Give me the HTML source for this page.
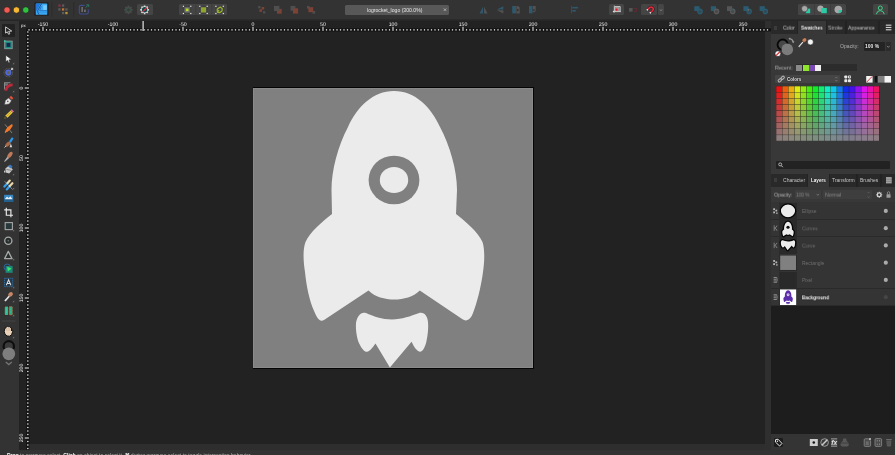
<!DOCTYPE html><html><head><meta charset="utf-8"><title>logrocket_logo</title><style>
*{margin:0;padding:0;box-sizing:border-box}
html,body{width:895px;height:455px;overflow:hidden;background:#222;font-family:"Liberation Sans",sans-serif;}
body{position:relative}
.abs{position:absolute}
.t{position:absolute;white-space:nowrap;line-height:1;color:#ccc;font-size:5.6px}
.btn{position:absolute;background:#464646;border-radius:1.5px}
svg{position:absolute;left:0;top:0;overflow:visible}
</style></head><body><div id="app" style="position:absolute;left:0;top:0;width:895px;height:455px;will-change:transform">
<div class="abs" style="left:19px;top:20px;width:752px;height:430px;background:#222"></div>
<div class="abs" style="left:253px;top:87px;width:281px;height:282px;background:#050505"></div>
<div class="abs" style="left:253px;top:88px;width:280px;height:280px;background:#808080;box-shadow:inset 0 0 0 1px #8a8a8a"></div>
<svg width="895" height="455" viewBox="0 0 895 455">
<path fill="#ebebeb" d="M394 91 C373 91 357 107 348 127 C338 146 331.5 170 331.5 190 L332 214 C322 222 310 232 305.5 242 C302.5 250 303.5 262 305 272 C306.3 285 309.3 301 314.3 311.5 C316.3 316 319 322.8 324 320 L368.5 290.5 C375 297 385 299.5 394 299.5 C404 299.5 413 297 419.8 290.5 L462.5 319.3 C467 322.5 471 318.5 473 313 C477 303 481 287 483 272 C484.5 262 485 250 482.5 242 C478 232 466 222 456 214 L457 190 C457 170 450 146 440 127 C431 107 415 91 394 91 Z"/>
<ellipse cx="394" cy="180" rx="25.4" ry="24.3" fill="#808080"/>
<ellipse cx="394" cy="180" rx="14.2" ry="13" fill="#ebebeb"/>
<path fill="#ebebeb" d="M366 313 C361 311.3 357 316 356 323 C355.5 330 357 340 360 345 C362 349 364.5 352 367 351.8 C370 351.5 373 347 375.5 343.5 L389.9 367.5 L411.5 341.7 C413 344 415 350 419.8 351.8 C423 352 425.5 346 426.5 341 C428 334 428.5 327 428 322 C427.5 316 424 311.3 418.5 313.3 C411 316 402 319.5 392 319.5 C382 319.5 373 316 366 313 Z"/>
</svg>
<div class="abs" style="left:765px;top:21px;width:6px;height:429px;background:#2f2f2f"></div>
<div class="abs" style="left:29px;top:444.4px;width:736px;height:5.6px;background:#2e2e2e"></div>
<svg width="895" height="455" viewBox="0 0 895 455"><rect x="29" y="28.4" width="742" height="2.9" fill="#131313"/><rect x="26.3" y="28.4" width="2.9" height="421.6" fill="#131313"/><rect x="27.75" y="28.5" width="2.5" height="2.8" fill="#141414"/><rect x="31.25" y="28.5" width="2.5" height="2.8" fill="#141414"/><rect x="34.75" y="28.5" width="2.5" height="2.8" fill="#141414"/><rect x="38.25" y="28.5" width="2.5" height="2.8" fill="#141414"/><rect x="41.90" y="26.2" width="2.2" height="5.2" fill="#121212"/><rect x="45.25" y="28.5" width="2.5" height="2.8" fill="#141414"/><rect x="48.75" y="28.5" width="2.5" height="2.8" fill="#141414"/><rect x="52.25" y="28.5" width="2.5" height="2.8" fill="#141414"/><rect x="55.75" y="28.5" width="2.5" height="2.8" fill="#141414"/><rect x="59.25" y="28.5" width="2.5" height="2.8" fill="#141414"/><rect x="62.75" y="28.5" width="2.5" height="2.8" fill="#141414"/><rect x="66.25" y="28.5" width="2.5" height="2.8" fill="#141414"/><rect x="69.75" y="28.5" width="2.5" height="2.8" fill="#141414"/><rect x="73.25" y="28.5" width="2.5" height="2.8" fill="#141414"/><rect x="76.75" y="28.5" width="2.5" height="2.8" fill="#141414"/><rect x="80.25" y="28.5" width="2.5" height="2.8" fill="#141414"/><rect x="83.75" y="28.5" width="2.5" height="2.8" fill="#141414"/><rect x="87.25" y="28.5" width="2.5" height="2.8" fill="#141414"/><rect x="90.75" y="28.5" width="2.5" height="2.8" fill="#141414"/><rect x="94.25" y="28.5" width="2.5" height="2.8" fill="#141414"/><rect x="97.75" y="28.5" width="2.5" height="2.8" fill="#141414"/><rect x="101.25" y="28.5" width="2.5" height="2.8" fill="#141414"/><rect x="104.75" y="28.5" width="2.5" height="2.8" fill="#141414"/><rect x="108.25" y="28.5" width="2.5" height="2.8" fill="#141414"/><rect x="111.90" y="26.2" width="2.2" height="5.2" fill="#121212"/><rect x="115.25" y="28.5" width="2.5" height="2.8" fill="#141414"/><rect x="118.75" y="28.5" width="2.5" height="2.8" fill="#141414"/><rect x="122.25" y="28.5" width="2.5" height="2.8" fill="#141414"/><rect x="125.75" y="28.5" width="2.5" height="2.8" fill="#141414"/><rect x="129.25" y="28.5" width="2.5" height="2.8" fill="#141414"/><rect x="132.75" y="28.5" width="2.5" height="2.8" fill="#141414"/><rect x="136.25" y="28.5" width="2.5" height="2.8" fill="#141414"/><rect x="139.75" y="28.5" width="2.5" height="2.8" fill="#141414"/><rect x="143.25" y="28.5" width="2.5" height="2.8" fill="#141414"/><rect x="146.75" y="28.5" width="2.5" height="2.8" fill="#141414"/><rect x="150.25" y="28.5" width="2.5" height="2.8" fill="#141414"/><rect x="153.75" y="28.5" width="2.5" height="2.8" fill="#141414"/><rect x="157.25" y="28.5" width="2.5" height="2.8" fill="#141414"/><rect x="160.75" y="28.5" width="2.5" height="2.8" fill="#141414"/><rect x="164.25" y="28.5" width="2.5" height="2.8" fill="#141414"/><rect x="167.75" y="28.5" width="2.5" height="2.8" fill="#141414"/><rect x="171.25" y="28.5" width="2.5" height="2.8" fill="#141414"/><rect x="174.75" y="28.5" width="2.5" height="2.8" fill="#141414"/><rect x="178.25" y="28.5" width="2.5" height="2.8" fill="#141414"/><rect x="181.90" y="26.2" width="2.2" height="5.2" fill="#121212"/><rect x="185.25" y="28.5" width="2.5" height="2.8" fill="#141414"/><rect x="188.75" y="28.5" width="2.5" height="2.8" fill="#141414"/><rect x="192.25" y="28.5" width="2.5" height="2.8" fill="#141414"/><rect x="195.75" y="28.5" width="2.5" height="2.8" fill="#141414"/><rect x="199.25" y="28.5" width="2.5" height="2.8" fill="#141414"/><rect x="202.75" y="28.5" width="2.5" height="2.8" fill="#141414"/><rect x="206.25" y="28.5" width="2.5" height="2.8" fill="#141414"/><rect x="209.75" y="28.5" width="2.5" height="2.8" fill="#141414"/><rect x="213.25" y="28.5" width="2.5" height="2.8" fill="#141414"/><rect x="216.75" y="28.5" width="2.5" height="2.8" fill="#141414"/><rect x="220.25" y="28.5" width="2.5" height="2.8" fill="#141414"/><rect x="223.75" y="28.5" width="2.5" height="2.8" fill="#141414"/><rect x="227.25" y="28.5" width="2.5" height="2.8" fill="#141414"/><rect x="230.75" y="28.5" width="2.5" height="2.8" fill="#141414"/><rect x="234.25" y="28.5" width="2.5" height="2.8" fill="#141414"/><rect x="237.75" y="28.5" width="2.5" height="2.8" fill="#141414"/><rect x="241.25" y="28.5" width="2.5" height="2.8" fill="#141414"/><rect x="244.75" y="28.5" width="2.5" height="2.8" fill="#141414"/><rect x="248.25" y="28.5" width="2.5" height="2.8" fill="#141414"/><rect x="251.90" y="26.2" width="2.2" height="5.2" fill="#121212"/><rect x="255.25" y="28.5" width="2.5" height="2.8" fill="#141414"/><rect x="258.75" y="28.5" width="2.5" height="2.8" fill="#141414"/><rect x="262.25" y="28.5" width="2.5" height="2.8" fill="#141414"/><rect x="265.75" y="28.5" width="2.5" height="2.8" fill="#141414"/><rect x="269.25" y="28.5" width="2.5" height="2.8" fill="#141414"/><rect x="272.75" y="28.5" width="2.5" height="2.8" fill="#141414"/><rect x="276.25" y="28.5" width="2.5" height="2.8" fill="#141414"/><rect x="279.75" y="28.5" width="2.5" height="2.8" fill="#141414"/><rect x="283.25" y="28.5" width="2.5" height="2.8" fill="#141414"/><rect x="286.75" y="28.5" width="2.5" height="2.8" fill="#141414"/><rect x="290.25" y="28.5" width="2.5" height="2.8" fill="#141414"/><rect x="293.75" y="28.5" width="2.5" height="2.8" fill="#141414"/><rect x="297.25" y="28.5" width="2.5" height="2.8" fill="#141414"/><rect x="300.75" y="28.5" width="2.5" height="2.8" fill="#141414"/><rect x="304.25" y="28.5" width="2.5" height="2.8" fill="#141414"/><rect x="307.75" y="28.5" width="2.5" height="2.8" fill="#141414"/><rect x="311.25" y="28.5" width="2.5" height="2.8" fill="#141414"/><rect x="314.75" y="28.5" width="2.5" height="2.8" fill="#141414"/><rect x="318.25" y="28.5" width="2.5" height="2.8" fill="#141414"/><rect x="321.90" y="26.2" width="2.2" height="5.2" fill="#121212"/><rect x="325.25" y="28.5" width="2.5" height="2.8" fill="#141414"/><rect x="328.75" y="28.5" width="2.5" height="2.8" fill="#141414"/><rect x="332.25" y="28.5" width="2.5" height="2.8" fill="#141414"/><rect x="335.75" y="28.5" width="2.5" height="2.8" fill="#141414"/><rect x="339.25" y="28.5" width="2.5" height="2.8" fill="#141414"/><rect x="342.75" y="28.5" width="2.5" height="2.8" fill="#141414"/><rect x="346.25" y="28.5" width="2.5" height="2.8" fill="#141414"/><rect x="349.75" y="28.5" width="2.5" height="2.8" fill="#141414"/><rect x="353.25" y="28.5" width="2.5" height="2.8" fill="#141414"/><rect x="356.75" y="28.5" width="2.5" height="2.8" fill="#141414"/><rect x="360.25" y="28.5" width="2.5" height="2.8" fill="#141414"/><rect x="363.75" y="28.5" width="2.5" height="2.8" fill="#141414"/><rect x="367.25" y="28.5" width="2.5" height="2.8" fill="#141414"/><rect x="370.75" y="28.5" width="2.5" height="2.8" fill="#141414"/><rect x="374.25" y="28.5" width="2.5" height="2.8" fill="#141414"/><rect x="377.75" y="28.5" width="2.5" height="2.8" fill="#141414"/><rect x="381.25" y="28.5" width="2.5" height="2.8" fill="#141414"/><rect x="384.75" y="28.5" width="2.5" height="2.8" fill="#141414"/><rect x="388.25" y="28.5" width="2.5" height="2.8" fill="#141414"/><rect x="391.90" y="26.2" width="2.2" height="5.2" fill="#121212"/><rect x="395.25" y="28.5" width="2.5" height="2.8" fill="#141414"/><rect x="398.75" y="28.5" width="2.5" height="2.8" fill="#141414"/><rect x="402.25" y="28.5" width="2.5" height="2.8" fill="#141414"/><rect x="405.75" y="28.5" width="2.5" height="2.8" fill="#141414"/><rect x="409.25" y="28.5" width="2.5" height="2.8" fill="#141414"/><rect x="412.75" y="28.5" width="2.5" height="2.8" fill="#141414"/><rect x="416.25" y="28.5" width="2.5" height="2.8" fill="#141414"/><rect x="419.75" y="28.5" width="2.5" height="2.8" fill="#141414"/><rect x="423.25" y="28.5" width="2.5" height="2.8" fill="#141414"/><rect x="426.75" y="28.5" width="2.5" height="2.8" fill="#141414"/><rect x="430.25" y="28.5" width="2.5" height="2.8" fill="#141414"/><rect x="433.75" y="28.5" width="2.5" height="2.8" fill="#141414"/><rect x="437.25" y="28.5" width="2.5" height="2.8" fill="#141414"/><rect x="440.75" y="28.5" width="2.5" height="2.8" fill="#141414"/><rect x="444.25" y="28.5" width="2.5" height="2.8" fill="#141414"/><rect x="447.75" y="28.5" width="2.5" height="2.8" fill="#141414"/><rect x="451.25" y="28.5" width="2.5" height="2.8" fill="#141414"/><rect x="454.75" y="28.5" width="2.5" height="2.8" fill="#141414"/><rect x="458.25" y="28.5" width="2.5" height="2.8" fill="#141414"/><rect x="461.90" y="26.2" width="2.2" height="5.2" fill="#121212"/><rect x="465.25" y="28.5" width="2.5" height="2.8" fill="#141414"/><rect x="468.75" y="28.5" width="2.5" height="2.8" fill="#141414"/><rect x="472.25" y="28.5" width="2.5" height="2.8" fill="#141414"/><rect x="475.75" y="28.5" width="2.5" height="2.8" fill="#141414"/><rect x="479.25" y="28.5" width="2.5" height="2.8" fill="#141414"/><rect x="482.75" y="28.5" width="2.5" height="2.8" fill="#141414"/><rect x="486.25" y="28.5" width="2.5" height="2.8" fill="#141414"/><rect x="489.75" y="28.5" width="2.5" height="2.8" fill="#141414"/><rect x="493.25" y="28.5" width="2.5" height="2.8" fill="#141414"/><rect x="496.75" y="28.5" width="2.5" height="2.8" fill="#141414"/><rect x="500.25" y="28.5" width="2.5" height="2.8" fill="#141414"/><rect x="503.75" y="28.5" width="2.5" height="2.8" fill="#141414"/><rect x="507.25" y="28.5" width="2.5" height="2.8" fill="#141414"/><rect x="510.75" y="28.5" width="2.5" height="2.8" fill="#141414"/><rect x="514.25" y="28.5" width="2.5" height="2.8" fill="#141414"/><rect x="517.75" y="28.5" width="2.5" height="2.8" fill="#141414"/><rect x="521.25" y="28.5" width="2.5" height="2.8" fill="#141414"/><rect x="524.75" y="28.5" width="2.5" height="2.8" fill="#141414"/><rect x="528.25" y="28.5" width="2.5" height="2.8" fill="#141414"/><rect x="531.90" y="26.2" width="2.2" height="5.2" fill="#121212"/><rect x="535.25" y="28.5" width="2.5" height="2.8" fill="#141414"/><rect x="538.75" y="28.5" width="2.5" height="2.8" fill="#141414"/><rect x="542.25" y="28.5" width="2.5" height="2.8" fill="#141414"/><rect x="545.75" y="28.5" width="2.5" height="2.8" fill="#141414"/><rect x="549.25" y="28.5" width="2.5" height="2.8" fill="#141414"/><rect x="552.75" y="28.5" width="2.5" height="2.8" fill="#141414"/><rect x="556.25" y="28.5" width="2.5" height="2.8" fill="#141414"/><rect x="559.75" y="28.5" width="2.5" height="2.8" fill="#141414"/><rect x="563.25" y="28.5" width="2.5" height="2.8" fill="#141414"/><rect x="566.75" y="28.5" width="2.5" height="2.8" fill="#141414"/><rect x="570.25" y="28.5" width="2.5" height="2.8" fill="#141414"/><rect x="573.75" y="28.5" width="2.5" height="2.8" fill="#141414"/><rect x="577.25" y="28.5" width="2.5" height="2.8" fill="#141414"/><rect x="580.75" y="28.5" width="2.5" height="2.8" fill="#141414"/><rect x="584.25" y="28.5" width="2.5" height="2.8" fill="#141414"/><rect x="587.75" y="28.5" width="2.5" height="2.8" fill="#141414"/><rect x="591.25" y="28.5" width="2.5" height="2.8" fill="#141414"/><rect x="594.75" y="28.5" width="2.5" height="2.8" fill="#141414"/><rect x="598.25" y="28.5" width="2.5" height="2.8" fill="#141414"/><rect x="601.90" y="26.2" width="2.2" height="5.2" fill="#121212"/><rect x="605.25" y="28.5" width="2.5" height="2.8" fill="#141414"/><rect x="608.75" y="28.5" width="2.5" height="2.8" fill="#141414"/><rect x="612.25" y="28.5" width="2.5" height="2.8" fill="#141414"/><rect x="615.75" y="28.5" width="2.5" height="2.8" fill="#141414"/><rect x="619.25" y="28.5" width="2.5" height="2.8" fill="#141414"/><rect x="622.75" y="28.5" width="2.5" height="2.8" fill="#141414"/><rect x="626.25" y="28.5" width="2.5" height="2.8" fill="#141414"/><rect x="629.75" y="28.5" width="2.5" height="2.8" fill="#141414"/><rect x="633.25" y="28.5" width="2.5" height="2.8" fill="#141414"/><rect x="636.75" y="28.5" width="2.5" height="2.8" fill="#141414"/><rect x="640.25" y="28.5" width="2.5" height="2.8" fill="#141414"/><rect x="643.75" y="28.5" width="2.5" height="2.8" fill="#141414"/><rect x="647.25" y="28.5" width="2.5" height="2.8" fill="#141414"/><rect x="650.75" y="28.5" width="2.5" height="2.8" fill="#141414"/><rect x="654.25" y="28.5" width="2.5" height="2.8" fill="#141414"/><rect x="657.75" y="28.5" width="2.5" height="2.8" fill="#141414"/><rect x="661.25" y="28.5" width="2.5" height="2.8" fill="#141414"/><rect x="664.75" y="28.5" width="2.5" height="2.8" fill="#141414"/><rect x="668.25" y="28.5" width="2.5" height="2.8" fill="#141414"/><rect x="671.90" y="26.2" width="2.2" height="5.2" fill="#121212"/><rect x="675.25" y="28.5" width="2.5" height="2.8" fill="#141414"/><rect x="678.75" y="28.5" width="2.5" height="2.8" fill="#141414"/><rect x="682.25" y="28.5" width="2.5" height="2.8" fill="#141414"/><rect x="685.75" y="28.5" width="2.5" height="2.8" fill="#141414"/><rect x="689.25" y="28.5" width="2.5" height="2.8" fill="#141414"/><rect x="692.75" y="28.5" width="2.5" height="2.8" fill="#141414"/><rect x="696.25" y="28.5" width="2.5" height="2.8" fill="#141414"/><rect x="699.75" y="28.5" width="2.5" height="2.8" fill="#141414"/><rect x="703.25" y="28.5" width="2.5" height="2.8" fill="#141414"/><rect x="706.75" y="28.5" width="2.5" height="2.8" fill="#141414"/><rect x="710.25" y="28.5" width="2.5" height="2.8" fill="#141414"/><rect x="713.75" y="28.5" width="2.5" height="2.8" fill="#141414"/><rect x="717.25" y="28.5" width="2.5" height="2.8" fill="#141414"/><rect x="720.75" y="28.5" width="2.5" height="2.8" fill="#141414"/><rect x="724.25" y="28.5" width="2.5" height="2.8" fill="#141414"/><rect x="727.75" y="28.5" width="2.5" height="2.8" fill="#141414"/><rect x="731.25" y="28.5" width="2.5" height="2.8" fill="#141414"/><rect x="734.75" y="28.5" width="2.5" height="2.8" fill="#141414"/><rect x="738.25" y="28.5" width="2.5" height="2.8" fill="#141414"/><rect x="741.90" y="26.2" width="2.2" height="5.2" fill="#121212"/><rect x="745.25" y="28.5" width="2.5" height="2.8" fill="#141414"/><rect x="748.75" y="28.5" width="2.5" height="2.8" fill="#141414"/><rect x="752.25" y="28.5" width="2.5" height="2.8" fill="#141414"/><rect x="755.75" y="28.5" width="2.5" height="2.8" fill="#141414"/><rect x="759.25" y="28.5" width="2.5" height="2.8" fill="#141414"/><rect x="762.75" y="28.5" width="2.5" height="2.8" fill="#141414"/><rect x="766.25" y="28.5" width="2.5" height="2.8" fill="#141414"/><rect x="26.4" y="30.75" width="2.8" height="2.5" fill="#141414"/><rect x="26.4" y="34.25" width="2.8" height="2.5" fill="#141414"/><rect x="26.4" y="37.75" width="2.8" height="2.5" fill="#141414"/><rect x="26.4" y="41.25" width="2.8" height="2.5" fill="#141414"/><rect x="26.4" y="44.75" width="2.8" height="2.5" fill="#141414"/><rect x="26.4" y="48.25" width="2.8" height="2.5" fill="#141414"/><rect x="26.4" y="51.75" width="2.8" height="2.5" fill="#141414"/><rect x="26.4" y="55.25" width="2.8" height="2.5" fill="#141414"/><rect x="26.4" y="58.75" width="2.8" height="2.5" fill="#141414"/><rect x="26.4" y="62.25" width="2.8" height="2.5" fill="#141414"/><rect x="26.4" y="65.75" width="2.8" height="2.5" fill="#141414"/><rect x="26.4" y="69.25" width="2.8" height="2.5" fill="#141414"/><rect x="26.4" y="72.75" width="2.8" height="2.5" fill="#141414"/><rect x="26.4" y="76.25" width="2.8" height="2.5" fill="#141414"/><rect x="26.4" y="79.75" width="2.8" height="2.5" fill="#141414"/><rect x="26.4" y="83.25" width="2.8" height="2.5" fill="#141414"/><rect x="24.2" y="86.90" width="5.2" height="2.2" fill="#121212"/><rect x="26.4" y="90.25" width="2.8" height="2.5" fill="#141414"/><rect x="26.4" y="93.75" width="2.8" height="2.5" fill="#141414"/><rect x="26.4" y="97.25" width="2.8" height="2.5" fill="#141414"/><rect x="26.4" y="100.75" width="2.8" height="2.5" fill="#141414"/><rect x="26.4" y="104.25" width="2.8" height="2.5" fill="#141414"/><rect x="26.4" y="107.75" width="2.8" height="2.5" fill="#141414"/><rect x="26.4" y="111.25" width="2.8" height="2.5" fill="#141414"/><rect x="26.4" y="114.75" width="2.8" height="2.5" fill="#141414"/><rect x="26.4" y="118.25" width="2.8" height="2.5" fill="#141414"/><rect x="26.4" y="121.75" width="2.8" height="2.5" fill="#141414"/><rect x="26.4" y="125.25" width="2.8" height="2.5" fill="#141414"/><rect x="26.4" y="128.75" width="2.8" height="2.5" fill="#141414"/><rect x="26.4" y="132.25" width="2.8" height="2.5" fill="#141414"/><rect x="26.4" y="135.75" width="2.8" height="2.5" fill="#141414"/><rect x="26.4" y="139.25" width="2.8" height="2.5" fill="#141414"/><rect x="26.4" y="142.75" width="2.8" height="2.5" fill="#141414"/><rect x="26.4" y="146.25" width="2.8" height="2.5" fill="#141414"/><rect x="26.4" y="149.75" width="2.8" height="2.5" fill="#141414"/><rect x="26.4" y="153.25" width="2.8" height="2.5" fill="#141414"/><rect x="24.2" y="156.90" width="5.2" height="2.2" fill="#121212"/><rect x="26.4" y="160.25" width="2.8" height="2.5" fill="#141414"/><rect x="26.4" y="163.75" width="2.8" height="2.5" fill="#141414"/><rect x="26.4" y="167.25" width="2.8" height="2.5" fill="#141414"/><rect x="26.4" y="170.75" width="2.8" height="2.5" fill="#141414"/><rect x="26.4" y="174.25" width="2.8" height="2.5" fill="#141414"/><rect x="26.4" y="177.75" width="2.8" height="2.5" fill="#141414"/><rect x="26.4" y="181.25" width="2.8" height="2.5" fill="#141414"/><rect x="26.4" y="184.75" width="2.8" height="2.5" fill="#141414"/><rect x="26.4" y="188.25" width="2.8" height="2.5" fill="#141414"/><rect x="26.4" y="191.75" width="2.8" height="2.5" fill="#141414"/><rect x="26.4" y="195.25" width="2.8" height="2.5" fill="#141414"/><rect x="26.4" y="198.75" width="2.8" height="2.5" fill="#141414"/><rect x="26.4" y="202.25" width="2.8" height="2.5" fill="#141414"/><rect x="26.4" y="205.75" width="2.8" height="2.5" fill="#141414"/><rect x="26.4" y="209.25" width="2.8" height="2.5" fill="#141414"/><rect x="26.4" y="212.75" width="2.8" height="2.5" fill="#141414"/><rect x="26.4" y="216.25" width="2.8" height="2.5" fill="#141414"/><rect x="26.4" y="219.75" width="2.8" height="2.5" fill="#141414"/><rect x="26.4" y="223.25" width="2.8" height="2.5" fill="#141414"/><rect x="24.2" y="226.90" width="5.2" height="2.2" fill="#121212"/><rect x="26.4" y="230.25" width="2.8" height="2.5" fill="#141414"/><rect x="26.4" y="233.75" width="2.8" height="2.5" fill="#141414"/><rect x="26.4" y="237.25" width="2.8" height="2.5" fill="#141414"/><rect x="26.4" y="240.75" width="2.8" height="2.5" fill="#141414"/><rect x="26.4" y="244.25" width="2.8" height="2.5" fill="#141414"/><rect x="26.4" y="247.75" width="2.8" height="2.5" fill="#141414"/><rect x="26.4" y="251.25" width="2.8" height="2.5" fill="#141414"/><rect x="26.4" y="254.75" width="2.8" height="2.5" fill="#141414"/><rect x="26.4" y="258.25" width="2.8" height="2.5" fill="#141414"/><rect x="26.4" y="261.75" width="2.8" height="2.5" fill="#141414"/><rect x="26.4" y="265.25" width="2.8" height="2.5" fill="#141414"/><rect x="26.4" y="268.75" width="2.8" height="2.5" fill="#141414"/><rect x="26.4" y="272.25" width="2.8" height="2.5" fill="#141414"/><rect x="26.4" y="275.75" width="2.8" height="2.5" fill="#141414"/><rect x="26.4" y="279.25" width="2.8" height="2.5" fill="#141414"/><rect x="26.4" y="282.75" width="2.8" height="2.5" fill="#141414"/><rect x="26.4" y="286.25" width="2.8" height="2.5" fill="#141414"/><rect x="26.4" y="289.75" width="2.8" height="2.5" fill="#141414"/><rect x="26.4" y="293.25" width="2.8" height="2.5" fill="#141414"/><rect x="24.2" y="296.90" width="5.2" height="2.2" fill="#121212"/><rect x="26.4" y="300.25" width="2.8" height="2.5" fill="#141414"/><rect x="26.4" y="303.75" width="2.8" height="2.5" fill="#141414"/><rect x="26.4" y="307.25" width="2.8" height="2.5" fill="#141414"/><rect x="26.4" y="310.75" width="2.8" height="2.5" fill="#141414"/><rect x="26.4" y="314.25" width="2.8" height="2.5" fill="#141414"/><rect x="26.4" y="317.75" width="2.8" height="2.5" fill="#141414"/><rect x="26.4" y="321.25" width="2.8" height="2.5" fill="#141414"/><rect x="26.4" y="324.75" width="2.8" height="2.5" fill="#141414"/><rect x="26.4" y="328.25" width="2.8" height="2.5" fill="#141414"/><rect x="26.4" y="331.75" width="2.8" height="2.5" fill="#141414"/><rect x="26.4" y="335.25" width="2.8" height="2.5" fill="#141414"/><rect x="26.4" y="338.75" width="2.8" height="2.5" fill="#141414"/><rect x="26.4" y="342.25" width="2.8" height="2.5" fill="#141414"/><rect x="26.4" y="345.75" width="2.8" height="2.5" fill="#141414"/><rect x="26.4" y="349.25" width="2.8" height="2.5" fill="#141414"/><rect x="26.4" y="352.75" width="2.8" height="2.5" fill="#141414"/><rect x="26.4" y="356.25" width="2.8" height="2.5" fill="#141414"/><rect x="26.4" y="359.75" width="2.8" height="2.5" fill="#141414"/><rect x="26.4" y="363.25" width="2.8" height="2.5" fill="#141414"/><rect x="24.2" y="366.90" width="5.2" height="2.2" fill="#121212"/><rect x="26.4" y="370.25" width="2.8" height="2.5" fill="#141414"/><rect x="26.4" y="373.75" width="2.8" height="2.5" fill="#141414"/><rect x="26.4" y="377.25" width="2.8" height="2.5" fill="#141414"/><rect x="26.4" y="380.75" width="2.8" height="2.5" fill="#141414"/><rect x="26.4" y="384.25" width="2.8" height="2.5" fill="#141414"/><rect x="26.4" y="387.75" width="2.8" height="2.5" fill="#141414"/><rect x="26.4" y="391.25" width="2.8" height="2.5" fill="#141414"/><rect x="26.4" y="394.75" width="2.8" height="2.5" fill="#141414"/><rect x="26.4" y="398.25" width="2.8" height="2.5" fill="#141414"/><rect x="26.4" y="401.75" width="2.8" height="2.5" fill="#141414"/><rect x="26.4" y="405.25" width="2.8" height="2.5" fill="#141414"/><rect x="26.4" y="408.75" width="2.8" height="2.5" fill="#141414"/><rect x="26.4" y="412.25" width="2.8" height="2.5" fill="#141414"/><rect x="26.4" y="415.75" width="2.8" height="2.5" fill="#141414"/><rect x="26.4" y="419.25" width="2.8" height="2.5" fill="#141414"/><rect x="26.4" y="422.75" width="2.8" height="2.5" fill="#141414"/><rect x="26.4" y="426.25" width="2.8" height="2.5" fill="#141414"/><rect x="26.4" y="429.75" width="2.8" height="2.5" fill="#141414"/><rect x="26.4" y="433.25" width="2.8" height="2.5" fill="#141414"/><rect x="24.2" y="436.90" width="5.2" height="2.2" fill="#121212"/><rect x="26.4" y="440.25" width="2.8" height="2.5" fill="#141414"/><rect x="26.4" y="443.75" width="2.8" height="2.5" fill="#141414"/><rect x="26.4" y="447.25" width="2.8" height="2.5" fill="#141414"/><rect x="28.38" y="29.1" width="1.24" height="1.5" fill="#d4d4d4"/><rect x="31.88" y="29.1" width="1.24" height="1.5" fill="#d4d4d4"/><rect x="35.38" y="29.1" width="1.24" height="1.5" fill="#d4d4d4"/><rect x="38.88" y="29.1" width="1.24" height="1.5" fill="#d4d4d4"/><rect x="42.45" y="26.7" width="1.1" height="4.2" fill="#e2e2e2"/><rect x="45.88" y="29.1" width="1.24" height="1.5" fill="#d4d4d4"/><rect x="49.38" y="29.1" width="1.24" height="1.5" fill="#d4d4d4"/><rect x="52.88" y="29.1" width="1.24" height="1.5" fill="#d4d4d4"/><rect x="56.38" y="29.1" width="1.24" height="1.5" fill="#d4d4d4"/><rect x="59.88" y="29.1" width="1.24" height="1.5" fill="#d4d4d4"/><rect x="63.38" y="29.1" width="1.24" height="1.5" fill="#d4d4d4"/><rect x="66.88" y="29.1" width="1.24" height="1.5" fill="#d4d4d4"/><rect x="70.38" y="29.1" width="1.24" height="1.5" fill="#d4d4d4"/><rect x="73.88" y="29.1" width="1.24" height="1.5" fill="#d4d4d4"/><rect x="77.38" y="29.1" width="1.24" height="1.5" fill="#d4d4d4"/><rect x="80.88" y="29.1" width="1.24" height="1.5" fill="#d4d4d4"/><rect x="84.38" y="29.1" width="1.24" height="1.5" fill="#d4d4d4"/><rect x="87.88" y="29.1" width="1.24" height="1.5" fill="#d4d4d4"/><rect x="91.38" y="29.1" width="1.24" height="1.5" fill="#d4d4d4"/><rect x="94.88" y="29.1" width="1.24" height="1.5" fill="#d4d4d4"/><rect x="98.38" y="29.1" width="1.24" height="1.5" fill="#d4d4d4"/><rect x="101.88" y="29.1" width="1.24" height="1.5" fill="#d4d4d4"/><rect x="105.38" y="29.1" width="1.24" height="1.5" fill="#d4d4d4"/><rect x="108.88" y="29.1" width="1.24" height="1.5" fill="#d4d4d4"/><rect x="112.45" y="26.7" width="1.1" height="4.2" fill="#e2e2e2"/><rect x="115.88" y="29.1" width="1.24" height="1.5" fill="#d4d4d4"/><rect x="119.38" y="29.1" width="1.24" height="1.5" fill="#d4d4d4"/><rect x="122.88" y="29.1" width="1.24" height="1.5" fill="#d4d4d4"/><rect x="126.38" y="29.1" width="1.24" height="1.5" fill="#d4d4d4"/><rect x="129.88" y="29.1" width="1.24" height="1.5" fill="#d4d4d4"/><rect x="133.38" y="29.1" width="1.24" height="1.5" fill="#d4d4d4"/><rect x="136.88" y="29.1" width="1.24" height="1.5" fill="#d4d4d4"/><rect x="140.38" y="29.1" width="1.24" height="1.5" fill="#d4d4d4"/><rect x="143.88" y="29.1" width="1.24" height="1.5" fill="#d4d4d4"/><rect x="147.38" y="29.1" width="1.24" height="1.5" fill="#d4d4d4"/><rect x="150.88" y="29.1" width="1.24" height="1.5" fill="#d4d4d4"/><rect x="154.38" y="29.1" width="1.24" height="1.5" fill="#d4d4d4"/><rect x="157.88" y="29.1" width="1.24" height="1.5" fill="#d4d4d4"/><rect x="161.38" y="29.1" width="1.24" height="1.5" fill="#d4d4d4"/><rect x="164.88" y="29.1" width="1.24" height="1.5" fill="#d4d4d4"/><rect x="168.38" y="29.1" width="1.24" height="1.5" fill="#d4d4d4"/><rect x="171.88" y="29.1" width="1.24" height="1.5" fill="#d4d4d4"/><rect x="175.38" y="29.1" width="1.24" height="1.5" fill="#d4d4d4"/><rect x="178.88" y="29.1" width="1.24" height="1.5" fill="#d4d4d4"/><rect x="182.45" y="26.7" width="1.1" height="4.2" fill="#e2e2e2"/><rect x="185.88" y="29.1" width="1.24" height="1.5" fill="#d4d4d4"/><rect x="189.38" y="29.1" width="1.24" height="1.5" fill="#d4d4d4"/><rect x="192.88" y="29.1" width="1.24" height="1.5" fill="#d4d4d4"/><rect x="196.38" y="29.1" width="1.24" height="1.5" fill="#d4d4d4"/><rect x="199.88" y="29.1" width="1.24" height="1.5" fill="#d4d4d4"/><rect x="203.38" y="29.1" width="1.24" height="1.5" fill="#d4d4d4"/><rect x="206.88" y="29.1" width="1.24" height="1.5" fill="#d4d4d4"/><rect x="210.38" y="29.1" width="1.24" height="1.5" fill="#d4d4d4"/><rect x="213.88" y="29.1" width="1.24" height="1.5" fill="#d4d4d4"/><rect x="217.38" y="29.1" width="1.24" height="1.5" fill="#d4d4d4"/><rect x="220.88" y="29.1" width="1.24" height="1.5" fill="#d4d4d4"/><rect x="224.38" y="29.1" width="1.24" height="1.5" fill="#d4d4d4"/><rect x="227.88" y="29.1" width="1.24" height="1.5" fill="#d4d4d4"/><rect x="231.38" y="29.1" width="1.24" height="1.5" fill="#d4d4d4"/><rect x="234.88" y="29.1" width="1.24" height="1.5" fill="#d4d4d4"/><rect x="238.38" y="29.1" width="1.24" height="1.5" fill="#d4d4d4"/><rect x="241.88" y="29.1" width="1.24" height="1.5" fill="#d4d4d4"/><rect x="245.38" y="29.1" width="1.24" height="1.5" fill="#d4d4d4"/><rect x="248.88" y="29.1" width="1.24" height="1.5" fill="#d4d4d4"/><rect x="252.45" y="26.7" width="1.1" height="4.2" fill="#e2e2e2"/><rect x="255.88" y="29.1" width="1.24" height="1.5" fill="#d4d4d4"/><rect x="259.38" y="29.1" width="1.24" height="1.5" fill="#d4d4d4"/><rect x="262.88" y="29.1" width="1.24" height="1.5" fill="#d4d4d4"/><rect x="266.38" y="29.1" width="1.24" height="1.5" fill="#d4d4d4"/><rect x="269.88" y="29.1" width="1.24" height="1.5" fill="#d4d4d4"/><rect x="273.38" y="29.1" width="1.24" height="1.5" fill="#d4d4d4"/><rect x="276.88" y="29.1" width="1.24" height="1.5" fill="#d4d4d4"/><rect x="280.38" y="29.1" width="1.24" height="1.5" fill="#d4d4d4"/><rect x="283.88" y="29.1" width="1.24" height="1.5" fill="#d4d4d4"/><rect x="287.38" y="29.1" width="1.24" height="1.5" fill="#d4d4d4"/><rect x="290.88" y="29.1" width="1.24" height="1.5" fill="#d4d4d4"/><rect x="294.38" y="29.1" width="1.24" height="1.5" fill="#d4d4d4"/><rect x="297.88" y="29.1" width="1.24" height="1.5" fill="#d4d4d4"/><rect x="301.38" y="29.1" width="1.24" height="1.5" fill="#d4d4d4"/><rect x="304.88" y="29.1" width="1.24" height="1.5" fill="#d4d4d4"/><rect x="308.38" y="29.1" width="1.24" height="1.5" fill="#d4d4d4"/><rect x="311.88" y="29.1" width="1.24" height="1.5" fill="#d4d4d4"/><rect x="315.38" y="29.1" width="1.24" height="1.5" fill="#d4d4d4"/><rect x="318.88" y="29.1" width="1.24" height="1.5" fill="#d4d4d4"/><rect x="322.45" y="26.7" width="1.1" height="4.2" fill="#e2e2e2"/><rect x="325.88" y="29.1" width="1.24" height="1.5" fill="#d4d4d4"/><rect x="329.38" y="29.1" width="1.24" height="1.5" fill="#d4d4d4"/><rect x="332.88" y="29.1" width="1.24" height="1.5" fill="#d4d4d4"/><rect x="336.38" y="29.1" width="1.24" height="1.5" fill="#d4d4d4"/><rect x="339.88" y="29.1" width="1.24" height="1.5" fill="#d4d4d4"/><rect x="343.38" y="29.1" width="1.24" height="1.5" fill="#d4d4d4"/><rect x="346.88" y="29.1" width="1.24" height="1.5" fill="#d4d4d4"/><rect x="350.38" y="29.1" width="1.24" height="1.5" fill="#d4d4d4"/><rect x="353.88" y="29.1" width="1.24" height="1.5" fill="#d4d4d4"/><rect x="357.38" y="29.1" width="1.24" height="1.5" fill="#d4d4d4"/><rect x="360.88" y="29.1" width="1.24" height="1.5" fill="#d4d4d4"/><rect x="364.38" y="29.1" width="1.24" height="1.5" fill="#d4d4d4"/><rect x="367.88" y="29.1" width="1.24" height="1.5" fill="#d4d4d4"/><rect x="371.38" y="29.1" width="1.24" height="1.5" fill="#d4d4d4"/><rect x="374.88" y="29.1" width="1.24" height="1.5" fill="#d4d4d4"/><rect x="378.38" y="29.1" width="1.24" height="1.5" fill="#d4d4d4"/><rect x="381.88" y="29.1" width="1.24" height="1.5" fill="#d4d4d4"/><rect x="385.38" y="29.1" width="1.24" height="1.5" fill="#d4d4d4"/><rect x="388.88" y="29.1" width="1.24" height="1.5" fill="#d4d4d4"/><rect x="392.45" y="26.7" width="1.1" height="4.2" fill="#e2e2e2"/><rect x="395.88" y="29.1" width="1.24" height="1.5" fill="#d4d4d4"/><rect x="399.38" y="29.1" width="1.24" height="1.5" fill="#d4d4d4"/><rect x="402.88" y="29.1" width="1.24" height="1.5" fill="#d4d4d4"/><rect x="406.38" y="29.1" width="1.24" height="1.5" fill="#d4d4d4"/><rect x="409.88" y="29.1" width="1.24" height="1.5" fill="#d4d4d4"/><rect x="413.38" y="29.1" width="1.24" height="1.5" fill="#d4d4d4"/><rect x="416.88" y="29.1" width="1.24" height="1.5" fill="#d4d4d4"/><rect x="420.38" y="29.1" width="1.24" height="1.5" fill="#d4d4d4"/><rect x="423.88" y="29.1" width="1.24" height="1.5" fill="#d4d4d4"/><rect x="427.38" y="29.1" width="1.24" height="1.5" fill="#d4d4d4"/><rect x="430.88" y="29.1" width="1.24" height="1.5" fill="#d4d4d4"/><rect x="434.38" y="29.1" width="1.24" height="1.5" fill="#d4d4d4"/><rect x="437.88" y="29.1" width="1.24" height="1.5" fill="#d4d4d4"/><rect x="441.38" y="29.1" width="1.24" height="1.5" fill="#d4d4d4"/><rect x="444.88" y="29.1" width="1.24" height="1.5" fill="#d4d4d4"/><rect x="448.38" y="29.1" width="1.24" height="1.5" fill="#d4d4d4"/><rect x="451.88" y="29.1" width="1.24" height="1.5" fill="#d4d4d4"/><rect x="455.38" y="29.1" width="1.24" height="1.5" fill="#d4d4d4"/><rect x="458.88" y="29.1" width="1.24" height="1.5" fill="#d4d4d4"/><rect x="462.45" y="26.7" width="1.1" height="4.2" fill="#e2e2e2"/><rect x="465.88" y="29.1" width="1.24" height="1.5" fill="#d4d4d4"/><rect x="469.38" y="29.1" width="1.24" height="1.5" fill="#d4d4d4"/><rect x="472.88" y="29.1" width="1.24" height="1.5" fill="#d4d4d4"/><rect x="476.38" y="29.1" width="1.24" height="1.5" fill="#d4d4d4"/><rect x="479.88" y="29.1" width="1.24" height="1.5" fill="#d4d4d4"/><rect x="483.38" y="29.1" width="1.24" height="1.5" fill="#d4d4d4"/><rect x="486.88" y="29.1" width="1.24" height="1.5" fill="#d4d4d4"/><rect x="490.38" y="29.1" width="1.24" height="1.5" fill="#d4d4d4"/><rect x="493.88" y="29.1" width="1.24" height="1.5" fill="#d4d4d4"/><rect x="497.38" y="29.1" width="1.24" height="1.5" fill="#d4d4d4"/><rect x="500.88" y="29.1" width="1.24" height="1.5" fill="#d4d4d4"/><rect x="504.38" y="29.1" width="1.24" height="1.5" fill="#d4d4d4"/><rect x="507.88" y="29.1" width="1.24" height="1.5" fill="#d4d4d4"/><rect x="511.38" y="29.1" width="1.24" height="1.5" fill="#d4d4d4"/><rect x="514.88" y="29.1" width="1.24" height="1.5" fill="#d4d4d4"/><rect x="518.38" y="29.1" width="1.24" height="1.5" fill="#d4d4d4"/><rect x="521.88" y="29.1" width="1.24" height="1.5" fill="#d4d4d4"/><rect x="525.38" y="29.1" width="1.24" height="1.5" fill="#d4d4d4"/><rect x="528.88" y="29.1" width="1.24" height="1.5" fill="#d4d4d4"/><rect x="532.45" y="26.7" width="1.1" height="4.2" fill="#e2e2e2"/><rect x="535.88" y="29.1" width="1.24" height="1.5" fill="#d4d4d4"/><rect x="539.38" y="29.1" width="1.24" height="1.5" fill="#d4d4d4"/><rect x="542.88" y="29.1" width="1.24" height="1.5" fill="#d4d4d4"/><rect x="546.38" y="29.1" width="1.24" height="1.5" fill="#d4d4d4"/><rect x="549.88" y="29.1" width="1.24" height="1.5" fill="#d4d4d4"/><rect x="553.38" y="29.1" width="1.24" height="1.5" fill="#d4d4d4"/><rect x="556.88" y="29.1" width="1.24" height="1.5" fill="#d4d4d4"/><rect x="560.38" y="29.1" width="1.24" height="1.5" fill="#d4d4d4"/><rect x="563.88" y="29.1" width="1.24" height="1.5" fill="#d4d4d4"/><rect x="567.38" y="29.1" width="1.24" height="1.5" fill="#d4d4d4"/><rect x="570.88" y="29.1" width="1.24" height="1.5" fill="#d4d4d4"/><rect x="574.38" y="29.1" width="1.24" height="1.5" fill="#d4d4d4"/><rect x="577.88" y="29.1" width="1.24" height="1.5" fill="#d4d4d4"/><rect x="581.38" y="29.1" width="1.24" height="1.5" fill="#d4d4d4"/><rect x="584.88" y="29.1" width="1.24" height="1.5" fill="#d4d4d4"/><rect x="588.38" y="29.1" width="1.24" height="1.5" fill="#d4d4d4"/><rect x="591.88" y="29.1" width="1.24" height="1.5" fill="#d4d4d4"/><rect x="595.38" y="29.1" width="1.24" height="1.5" fill="#d4d4d4"/><rect x="598.88" y="29.1" width="1.24" height="1.5" fill="#d4d4d4"/><rect x="602.45" y="26.7" width="1.1" height="4.2" fill="#e2e2e2"/><rect x="605.88" y="29.1" width="1.24" height="1.5" fill="#d4d4d4"/><rect x="609.38" y="29.1" width="1.24" height="1.5" fill="#d4d4d4"/><rect x="612.88" y="29.1" width="1.24" height="1.5" fill="#d4d4d4"/><rect x="616.38" y="29.1" width="1.24" height="1.5" fill="#d4d4d4"/><rect x="619.88" y="29.1" width="1.24" height="1.5" fill="#d4d4d4"/><rect x="623.38" y="29.1" width="1.24" height="1.5" fill="#d4d4d4"/><rect x="626.88" y="29.1" width="1.24" height="1.5" fill="#d4d4d4"/><rect x="630.38" y="29.1" width="1.24" height="1.5" fill="#d4d4d4"/><rect x="633.88" y="29.1" width="1.24" height="1.5" fill="#d4d4d4"/><rect x="637.38" y="29.1" width="1.24" height="1.5" fill="#d4d4d4"/><rect x="640.88" y="29.1" width="1.24" height="1.5" fill="#d4d4d4"/><rect x="644.38" y="29.1" width="1.24" height="1.5" fill="#d4d4d4"/><rect x="647.88" y="29.1" width="1.24" height="1.5" fill="#d4d4d4"/><rect x="651.38" y="29.1" width="1.24" height="1.5" fill="#d4d4d4"/><rect x="654.88" y="29.1" width="1.24" height="1.5" fill="#d4d4d4"/><rect x="658.38" y="29.1" width="1.24" height="1.5" fill="#d4d4d4"/><rect x="661.88" y="29.1" width="1.24" height="1.5" fill="#d4d4d4"/><rect x="665.38" y="29.1" width="1.24" height="1.5" fill="#d4d4d4"/><rect x="668.88" y="29.1" width="1.24" height="1.5" fill="#d4d4d4"/><rect x="672.45" y="26.7" width="1.1" height="4.2" fill="#e2e2e2"/><rect x="675.88" y="29.1" width="1.24" height="1.5" fill="#d4d4d4"/><rect x="679.38" y="29.1" width="1.24" height="1.5" fill="#d4d4d4"/><rect x="682.88" y="29.1" width="1.24" height="1.5" fill="#d4d4d4"/><rect x="686.38" y="29.1" width="1.24" height="1.5" fill="#d4d4d4"/><rect x="689.88" y="29.1" width="1.24" height="1.5" fill="#d4d4d4"/><rect x="693.38" y="29.1" width="1.24" height="1.5" fill="#d4d4d4"/><rect x="696.88" y="29.1" width="1.24" height="1.5" fill="#d4d4d4"/><rect x="700.38" y="29.1" width="1.24" height="1.5" fill="#d4d4d4"/><rect x="703.88" y="29.1" width="1.24" height="1.5" fill="#d4d4d4"/><rect x="707.38" y="29.1" width="1.24" height="1.5" fill="#d4d4d4"/><rect x="710.88" y="29.1" width="1.24" height="1.5" fill="#d4d4d4"/><rect x="714.38" y="29.1" width="1.24" height="1.5" fill="#d4d4d4"/><rect x="717.88" y="29.1" width="1.24" height="1.5" fill="#d4d4d4"/><rect x="721.38" y="29.1" width="1.24" height="1.5" fill="#d4d4d4"/><rect x="724.88" y="29.1" width="1.24" height="1.5" fill="#d4d4d4"/><rect x="728.38" y="29.1" width="1.24" height="1.5" fill="#d4d4d4"/><rect x="731.88" y="29.1" width="1.24" height="1.5" fill="#d4d4d4"/><rect x="735.38" y="29.1" width="1.24" height="1.5" fill="#d4d4d4"/><rect x="738.88" y="29.1" width="1.24" height="1.5" fill="#d4d4d4"/><rect x="742.45" y="26.7" width="1.1" height="4.2" fill="#e2e2e2"/><rect x="745.88" y="29.1" width="1.24" height="1.5" fill="#d4d4d4"/><rect x="749.38" y="29.1" width="1.24" height="1.5" fill="#d4d4d4"/><rect x="752.88" y="29.1" width="1.24" height="1.5" fill="#d4d4d4"/><rect x="756.38" y="29.1" width="1.24" height="1.5" fill="#d4d4d4"/><rect x="759.88" y="29.1" width="1.24" height="1.5" fill="#d4d4d4"/><rect x="763.38" y="29.1" width="1.24" height="1.5" fill="#d4d4d4"/><rect x="766.88" y="29.1" width="1.24" height="1.5" fill="#d4d4d4"/><rect x="27.05" y="31.38" width="1.5" height="1.24" fill="#d4d4d4"/><rect x="27.05" y="34.88" width="1.5" height="1.24" fill="#d4d4d4"/><rect x="27.05" y="38.38" width="1.5" height="1.24" fill="#d4d4d4"/><rect x="27.05" y="41.88" width="1.5" height="1.24" fill="#d4d4d4"/><rect x="27.05" y="45.38" width="1.5" height="1.24" fill="#d4d4d4"/><rect x="27.05" y="48.88" width="1.5" height="1.24" fill="#d4d4d4"/><rect x="27.05" y="52.38" width="1.5" height="1.24" fill="#d4d4d4"/><rect x="27.05" y="55.88" width="1.5" height="1.24" fill="#d4d4d4"/><rect x="27.05" y="59.38" width="1.5" height="1.24" fill="#d4d4d4"/><rect x="27.05" y="62.88" width="1.5" height="1.24" fill="#d4d4d4"/><rect x="27.05" y="66.38" width="1.5" height="1.24" fill="#d4d4d4"/><rect x="27.05" y="69.88" width="1.5" height="1.24" fill="#d4d4d4"/><rect x="27.05" y="73.38" width="1.5" height="1.24" fill="#d4d4d4"/><rect x="27.05" y="76.88" width="1.5" height="1.24" fill="#d4d4d4"/><rect x="27.05" y="80.38" width="1.5" height="1.24" fill="#d4d4d4"/><rect x="27.05" y="83.88" width="1.5" height="1.24" fill="#d4d4d4"/><rect x="24.7" y="87.45" width="4.2" height="1.1" fill="#e2e2e2"/><rect x="27.05" y="90.88" width="1.5" height="1.24" fill="#d4d4d4"/><rect x="27.05" y="94.38" width="1.5" height="1.24" fill="#d4d4d4"/><rect x="27.05" y="97.88" width="1.5" height="1.24" fill="#d4d4d4"/><rect x="27.05" y="101.38" width="1.5" height="1.24" fill="#d4d4d4"/><rect x="27.05" y="104.88" width="1.5" height="1.24" fill="#d4d4d4"/><rect x="27.05" y="108.38" width="1.5" height="1.24" fill="#d4d4d4"/><rect x="27.05" y="111.88" width="1.5" height="1.24" fill="#d4d4d4"/><rect x="27.05" y="115.38" width="1.5" height="1.24" fill="#d4d4d4"/><rect x="27.05" y="118.88" width="1.5" height="1.24" fill="#d4d4d4"/><rect x="27.05" y="122.38" width="1.5" height="1.24" fill="#d4d4d4"/><rect x="27.05" y="125.88" width="1.5" height="1.24" fill="#d4d4d4"/><rect x="27.05" y="129.38" width="1.5" height="1.24" fill="#d4d4d4"/><rect x="27.05" y="132.88" width="1.5" height="1.24" fill="#d4d4d4"/><rect x="27.05" y="136.38" width="1.5" height="1.24" fill="#d4d4d4"/><rect x="27.05" y="139.88" width="1.5" height="1.24" fill="#d4d4d4"/><rect x="27.05" y="143.38" width="1.5" height="1.24" fill="#d4d4d4"/><rect x="27.05" y="146.88" width="1.5" height="1.24" fill="#d4d4d4"/><rect x="27.05" y="150.38" width="1.5" height="1.24" fill="#d4d4d4"/><rect x="27.05" y="153.88" width="1.5" height="1.24" fill="#d4d4d4"/><rect x="24.7" y="157.45" width="4.2" height="1.1" fill="#e2e2e2"/><rect x="27.05" y="160.88" width="1.5" height="1.24" fill="#d4d4d4"/><rect x="27.05" y="164.38" width="1.5" height="1.24" fill="#d4d4d4"/><rect x="27.05" y="167.88" width="1.5" height="1.24" fill="#d4d4d4"/><rect x="27.05" y="171.38" width="1.5" height="1.24" fill="#d4d4d4"/><rect x="27.05" y="174.88" width="1.5" height="1.24" fill="#d4d4d4"/><rect x="27.05" y="178.38" width="1.5" height="1.24" fill="#d4d4d4"/><rect x="27.05" y="181.88" width="1.5" height="1.24" fill="#d4d4d4"/><rect x="27.05" y="185.38" width="1.5" height="1.24" fill="#d4d4d4"/><rect x="27.05" y="188.88" width="1.5" height="1.24" fill="#d4d4d4"/><rect x="27.05" y="192.38" width="1.5" height="1.24" fill="#d4d4d4"/><rect x="27.05" y="195.88" width="1.5" height="1.24" fill="#d4d4d4"/><rect x="27.05" y="199.38" width="1.5" height="1.24" fill="#d4d4d4"/><rect x="27.05" y="202.88" width="1.5" height="1.24" fill="#d4d4d4"/><rect x="27.05" y="206.38" width="1.5" height="1.24" fill="#d4d4d4"/><rect x="27.05" y="209.88" width="1.5" height="1.24" fill="#d4d4d4"/><rect x="27.05" y="213.38" width="1.5" height="1.24" fill="#d4d4d4"/><rect x="27.05" y="216.88" width="1.5" height="1.24" fill="#d4d4d4"/><rect x="27.05" y="220.38" width="1.5" height="1.24" fill="#d4d4d4"/><rect x="27.05" y="223.88" width="1.5" height="1.24" fill="#d4d4d4"/><rect x="24.7" y="227.45" width="4.2" height="1.1" fill="#e2e2e2"/><rect x="27.05" y="230.88" width="1.5" height="1.24" fill="#d4d4d4"/><rect x="27.05" y="234.38" width="1.5" height="1.24" fill="#d4d4d4"/><rect x="27.05" y="237.88" width="1.5" height="1.24" fill="#d4d4d4"/><rect x="27.05" y="241.38" width="1.5" height="1.24" fill="#d4d4d4"/><rect x="27.05" y="244.88" width="1.5" height="1.24" fill="#d4d4d4"/><rect x="27.05" y="248.38" width="1.5" height="1.24" fill="#d4d4d4"/><rect x="27.05" y="251.88" width="1.5" height="1.24" fill="#d4d4d4"/><rect x="27.05" y="255.38" width="1.5" height="1.24" fill="#d4d4d4"/><rect x="27.05" y="258.88" width="1.5" height="1.24" fill="#d4d4d4"/><rect x="27.05" y="262.38" width="1.5" height="1.24" fill="#d4d4d4"/><rect x="27.05" y="265.88" width="1.5" height="1.24" fill="#d4d4d4"/><rect x="27.05" y="269.38" width="1.5" height="1.24" fill="#d4d4d4"/><rect x="27.05" y="272.88" width="1.5" height="1.24" fill="#d4d4d4"/><rect x="27.05" y="276.38" width="1.5" height="1.24" fill="#d4d4d4"/><rect x="27.05" y="279.88" width="1.5" height="1.24" fill="#d4d4d4"/><rect x="27.05" y="283.38" width="1.5" height="1.24" fill="#d4d4d4"/><rect x="27.05" y="286.88" width="1.5" height="1.24" fill="#d4d4d4"/><rect x="27.05" y="290.38" width="1.5" height="1.24" fill="#d4d4d4"/><rect x="27.05" y="293.88" width="1.5" height="1.24" fill="#d4d4d4"/><rect x="24.7" y="297.45" width="4.2" height="1.1" fill="#e2e2e2"/><rect x="27.05" y="300.88" width="1.5" height="1.24" fill="#d4d4d4"/><rect x="27.05" y="304.38" width="1.5" height="1.24" fill="#d4d4d4"/><rect x="27.05" y="307.88" width="1.5" height="1.24" fill="#d4d4d4"/><rect x="27.05" y="311.38" width="1.5" height="1.24" fill="#d4d4d4"/><rect x="27.05" y="314.88" width="1.5" height="1.24" fill="#d4d4d4"/><rect x="27.05" y="318.38" width="1.5" height="1.24" fill="#d4d4d4"/><rect x="27.05" y="321.88" width="1.5" height="1.24" fill="#d4d4d4"/><rect x="27.05" y="325.38" width="1.5" height="1.24" fill="#d4d4d4"/><rect x="27.05" y="328.88" width="1.5" height="1.24" fill="#d4d4d4"/><rect x="27.05" y="332.38" width="1.5" height="1.24" fill="#d4d4d4"/><rect x="27.05" y="335.88" width="1.5" height="1.24" fill="#d4d4d4"/><rect x="27.05" y="339.38" width="1.5" height="1.24" fill="#d4d4d4"/><rect x="27.05" y="342.88" width="1.5" height="1.24" fill="#d4d4d4"/><rect x="27.05" y="346.38" width="1.5" height="1.24" fill="#d4d4d4"/><rect x="27.05" y="349.88" width="1.5" height="1.24" fill="#d4d4d4"/><rect x="27.05" y="353.38" width="1.5" height="1.24" fill="#d4d4d4"/><rect x="27.05" y="356.88" width="1.5" height="1.24" fill="#d4d4d4"/><rect x="27.05" y="360.38" width="1.5" height="1.24" fill="#d4d4d4"/><rect x="27.05" y="363.88" width="1.5" height="1.24" fill="#d4d4d4"/><rect x="24.7" y="367.45" width="4.2" height="1.1" fill="#e2e2e2"/><rect x="27.05" y="370.88" width="1.5" height="1.24" fill="#d4d4d4"/><rect x="27.05" y="374.38" width="1.5" height="1.24" fill="#d4d4d4"/><rect x="27.05" y="377.88" width="1.5" height="1.24" fill="#d4d4d4"/><rect x="27.05" y="381.38" width="1.5" height="1.24" fill="#d4d4d4"/><rect x="27.05" y="384.88" width="1.5" height="1.24" fill="#d4d4d4"/><rect x="27.05" y="388.38" width="1.5" height="1.24" fill="#d4d4d4"/><rect x="27.05" y="391.88" width="1.5" height="1.24" fill="#d4d4d4"/><rect x="27.05" y="395.38" width="1.5" height="1.24" fill="#d4d4d4"/><rect x="27.05" y="398.88" width="1.5" height="1.24" fill="#d4d4d4"/><rect x="27.05" y="402.38" width="1.5" height="1.24" fill="#d4d4d4"/><rect x="27.05" y="405.88" width="1.5" height="1.24" fill="#d4d4d4"/><rect x="27.05" y="409.38" width="1.5" height="1.24" fill="#d4d4d4"/><rect x="27.05" y="412.88" width="1.5" height="1.24" fill="#d4d4d4"/><rect x="27.05" y="416.38" width="1.5" height="1.24" fill="#d4d4d4"/><rect x="27.05" y="419.88" width="1.5" height="1.24" fill="#d4d4d4"/><rect x="27.05" y="423.38" width="1.5" height="1.24" fill="#d4d4d4"/><rect x="27.05" y="426.88" width="1.5" height="1.24" fill="#d4d4d4"/><rect x="27.05" y="430.38" width="1.5" height="1.24" fill="#d4d4d4"/><rect x="27.05" y="433.88" width="1.5" height="1.24" fill="#d4d4d4"/><rect x="24.7" y="437.45" width="4.2" height="1.1" fill="#e2e2e2"/><rect x="27.05" y="440.88" width="1.5" height="1.24" fill="#d4d4d4"/><rect x="27.05" y="444.38" width="1.5" height="1.24" fill="#d4d4d4"/><rect x="27.05" y="447.88" width="1.5" height="1.24" fill="#d4d4d4"/><rect x="142" y="20.5" width="2.2" height="10.8" fill="#121212"/><rect x="142.5" y="21" width="1.2" height="10" fill="#eee"/><text x="43.0" y="26" text-anchor="middle" style="font-family:Liberation Sans,sans-serif;font-size:5.2px;fill:#efefef;text-rendering:geometricPrecision">-150</text><text x="113.0" y="26" text-anchor="middle" style="font-family:Liberation Sans,sans-serif;font-size:5.2px;fill:#efefef;text-rendering:geometricPrecision">-100</text><text x="183.0" y="26" text-anchor="middle" style="font-family:Liberation Sans,sans-serif;font-size:5.2px;fill:#efefef;text-rendering:geometricPrecision">-50</text><text x="253.0" y="26" text-anchor="middle" style="font-family:Liberation Sans,sans-serif;font-size:5.2px;fill:#efefef;text-rendering:geometricPrecision">0</text><text x="323.0" y="26" text-anchor="middle" style="font-family:Liberation Sans,sans-serif;font-size:5.2px;fill:#efefef;text-rendering:geometricPrecision">50</text><text x="393.0" y="26" text-anchor="middle" style="font-family:Liberation Sans,sans-serif;font-size:5.2px;fill:#efefef;text-rendering:geometricPrecision">100</text><text x="463.0" y="26" text-anchor="middle" style="font-family:Liberation Sans,sans-serif;font-size:5.2px;fill:#efefef;text-rendering:geometricPrecision">150</text><text x="533.0" y="26" text-anchor="middle" style="font-family:Liberation Sans,sans-serif;font-size:5.2px;fill:#efefef;text-rendering:geometricPrecision">200</text><text x="603.0" y="26" text-anchor="middle" style="font-family:Liberation Sans,sans-serif;font-size:5.2px;fill:#efefef;text-rendering:geometricPrecision">250</text><text x="673.0" y="26" text-anchor="middle" style="font-family:Liberation Sans,sans-serif;font-size:5.2px;fill:#efefef;text-rendering:geometricPrecision">300</text><text x="743.0" y="26" text-anchor="middle" style="font-family:Liberation Sans,sans-serif;font-size:5.2px;fill:#efefef;text-rendering:geometricPrecision">350</text><text transform="translate(23.2 88.0) rotate(-90)" text-anchor="middle" style="font-family:Liberation Sans,sans-serif;font-size:5.2px;fill:#efefef;text-rendering:geometricPrecision">0</text><text transform="translate(23.2 158.0) rotate(-90)" text-anchor="middle" style="font-family:Liberation Sans,sans-serif;font-size:5.2px;fill:#efefef;text-rendering:geometricPrecision">50</text><text transform="translate(23.2 228.0) rotate(-90)" text-anchor="middle" style="font-family:Liberation Sans,sans-serif;font-size:5.2px;fill:#efefef;text-rendering:geometricPrecision">100</text><text transform="translate(23.2 298.0) rotate(-90)" text-anchor="middle" style="font-family:Liberation Sans,sans-serif;font-size:5.2px;fill:#efefef;text-rendering:geometricPrecision">150</text><text transform="translate(23.2 368.0) rotate(-90)" text-anchor="middle" style="font-family:Liberation Sans,sans-serif;font-size:5.2px;fill:#efefef;text-rendering:geometricPrecision">200</text><text transform="translate(23.2 438.0) rotate(-90)" text-anchor="middle" style="font-family:Liberation Sans,sans-serif;font-size:5.2px;fill:#efefef;text-rendering:geometricPrecision">250</text><text x="21" y="26.5" style="font-family:Liberation Sans,sans-serif;font-size:5.2px;fill:#efefef;text-rendering:geometricPrecision;font-size:4.4px">px</text></svg>
<div class="abs" style="left:0;top:0;width:895px;height:19.4px;background:#333"></div>
<div class="abs" style="left:0;top:19px;width:895px;height:2.3px;background:linear-gradient(#303030,#282828 40%,#262626)"></div>
<div class="abs" style="left:0;top:21px;width:19px;height:434px;background:#333"></div>
<div class="abs" style="left:771px;top:21px;width:124px;height:434px;background:#383838"></div>
<div class="abs" style="left:0;top:450px;width:895px;height:5px;background:#333"></div>
<div class="t" style="left:7.2px;top:453px;font-size:5.4px;color:#b4b4b4;transform-origin:0 0;transform:scaleX(0.9443)"><b style="color:#fff">Drag</b> to marquee select. <b style="color:#fff">Click</b> an object to select it. <b style="color:#fff">⌘</b> during marquee select to toggle intersection behavior.</div>
<div class="abs" style="left:34.3px;top:2px;width:14.4px;height:14px;background:#262626;border-radius:1.5px"></div>
<div class="abs" style="left:137px;top:4.3px;width:15.6px;height:10.9px;background:#454545;border-radius:1.5px"></div>
<div class="abs" style="left:179.2px;top:4.3px;width:47.5px;height:10.9px;background:#454545;border-radius:1.5px"></div>
<div class="abs" style="left:608.8px;top:4.3px;width:15.4px;height:10.9px;background:#454545;border-radius:1.5px"></div>
<div class="abs" style="left:641px;top:4.3px;width:16.2px;height:10.9px;background:#454545;border-radius:1.5px"></div>
<div class="abs" style="left:657.9px;top:4.3px;width:6.3px;height:10.9px;background:#454545;border-radius:1.5px"></div>
<div class="abs" style="left:798px;top:4.2px;width:47.7px;height:11px;background:#454545;border-radius:1.5px"></div>
<div class="abs" style="left:872.7px;top:4.2px;width:15.3px;height:11px;background:#454545;border-radius:1.5px"></div>
<div class="abs" style="left:345px;top:4.5px;width:104.2px;height:10.3px;background:#585858;border-radius:1.5px"></div>
<div class="t" style="left:366.60px;top:8.00px;font-size:5.4px;color:#e6e6e6;transform-origin:0 0;transform:scaleX(0.9481)">logrocket_logo (300.0%)</div>
<svg width="895" height="21" viewBox="0 0 895 21">
<path d="M443.8 8.5 L446.2 10.9 M446.2 8.5 L443.8 10.9" stroke="#c0c0c0" stroke-width="0.8"/>
<rect x="51.5" y="2" width="0.8" height="15" fill="#2b2b2b"/><rect x="73.3" y="2" width="0.8" height="15" fill="#2b2b2b"/>
<rect x="195.5" y="4.3" width="0.7" height="10.9" fill="#3a3a3a"/><rect x="211.5" y="4.3" width="0.7" height="10.9" fill="#3a3a3a"/>
<rect x="814.1" y="4.2" width="0.7" height="11" fill="#3a3a3a"/><rect x="830.2" y="4.2" width="0.7" height="11" fill="#3a3a3a"/>
<circle cx="7" cy="10" r="3.3" fill="#f45952" stroke="#252525" stroke-width="0.8"/><circle cx="16.4" cy="10" r="3.3" fill="#f6b731" stroke="#252525" stroke-width="0.8"/><circle cx="25.8" cy="10" r="3.3" fill="#2ec23e" stroke="#252525" stroke-width="0.8"/>
<rect x="35.8" y="3.5" width="11.4" height="11.3" rx="0.9" fill="#3ba9f4"/>
<path d="M35.8 4.4 Q35.8 3.5 36.7 3.5 H40.6 L35.8 12 Z" fill="#2277d8"/>
<path d="M41.5 3.7 L37.7 10.6 Q37.5 12.8 39 14.4" fill="none" stroke="#143f86" stroke-width="0.8"/>
<path d="M41.3 6.4 L39.6 10.7 H47.2" fill="none" stroke="#1c5aa8" stroke-width="0.6"/>
<path d="M38.4 12.4 H47.2" stroke="#2c8ad8" stroke-width="0.5"/>
<rect x="43.2" y="5.2" width="3.6" height="4.7" fill="#84d4fb" opacity="0.8"/>
<rect x="58.3" y="4.4" width="2.3" height="2.3" fill="#8a3045"/>
<rect x="61.9" y="4.4" width="2.3" height="2.3" fill="#5c5c5c"/>
<rect x="58.3" y="8.3" width="2.3" height="2.3" fill="#5c5c5c"/>
<rect x="61.9" y="8.3" width="2.3" height="2.3" fill="#c4742e"/>
<rect x="65.3" y="8.3" width="2.3" height="2.3" fill="#5c5c5c"/>
<rect x="61.9" y="11.9" width="2.3" height="2.3" fill="#5c5c5c"/>
<rect x="65.3" y="11.9" width="2.3" height="2.3" fill="#b49436"/>
<path d="M84.5 5.3 H81 Q79.3 5.3 79.3 7 V12.3 Q79.3 14 81 14 H86.6 Q88.3 14 88.3 12.3 V9.5" fill="none" stroke="#404c90" stroke-width="1.15"/>
<rect x="81.3" y="7" width="1.7" height="5" fill="#6a6a6a"/><rect x="84" y="9.6" width="1.9" height="2.4" fill="#6a6a6a"/>
<path d="M85.4 7.8 L88.4 5 M86.4 4.8 H88.7 V7" fill="none" stroke="#2a7a6a" stroke-width="0.9"/>
<path d="M132.72 9.06 L132.72 10.74 L131.76 10.58 L131.26 11.79 L132.05 12.36 L130.86 13.55 L130.29 12.76 L129.08 13.26 L129.24 14.22 L127.56 14.22 L127.72 13.26 L126.51 12.76 L125.94 13.55 L124.75 12.36 L125.54 11.79 L125.04 10.58 L124.08 10.74 L124.08 9.06 L125.04 9.22 L125.54 8.01 L124.75 7.44 L125.94 6.25 L126.51 7.04 L127.72 6.54 L127.56 5.58 L129.24 5.58 L129.08 6.54 L130.29 7.04 L130.86 6.25 L132.05 7.44 L131.26 8.01 L131.76 9.22 Z" fill="#4b4b4b"/>
<circle cx="128.4" cy="9.9" r="2.9" fill="#484848"/><circle cx="128.4" cy="9.9" r="1.9" fill="#383838" stroke="#2d6046" stroke-width="0.8"/>
<path d="M149.02 8.94 L149.02 10.66 L148.04 10.50 L147.53 11.74 L148.33 12.32 L147.12 13.53 L146.54 12.73 L145.30 13.24 L145.46 14.22 L143.74 14.22 L143.90 13.24 L142.66 12.73 L142.08 13.53 L140.87 12.32 L141.67 11.74 L141.16 10.50 L140.18 10.66 L140.18 8.94 L141.16 9.10 L141.67 7.86 L140.87 7.28 L142.08 6.07 L142.66 6.87 L143.90 6.36 L143.74 5.38 L145.46 5.38 L145.30 6.36 L146.54 6.87 L147.12 6.07 L148.33 7.28 L147.53 7.86 L148.04 9.10 Z" fill="#dcdcdc"/>
<circle cx="144.6" cy="9.8" r="2.7" fill="#0f4a4a"/><path d="M143 11.4 L146.2 8.2" stroke="#e8293d" stroke-width="1.3" stroke-linecap="round"/>
<rect x="182.80" y="5.70" width="1.2" height="1.2" fill="#e8e8e8"/>
<rect x="182.80" y="12.90" width="1.2" height="1.2" fill="#e8e8e8"/>
<rect x="190.20" y="5.70" width="1.2" height="1.2" fill="#e8e8e8"/>
<rect x="190.20" y="12.90" width="1.2" height="1.2" fill="#e8e8e8"/>
<path d="M184.9 6.300000000000001 H189.29999999999998 M184.9 13.5 H189.29999999999998 M183.4 7.7 V12.100000000000001 M190.79999999999998 7.7 V12.100000000000001" stroke="#333" stroke-width="0.7" stroke-dasharray="0.8 0.8"/>
<rect x="199.20" y="5.70" width="1.2" height="1.2" fill="#e8e8e8"/>
<rect x="199.20" y="12.90" width="1.2" height="1.2" fill="#e8e8e8"/>
<rect x="206.60" y="5.70" width="1.2" height="1.2" fill="#e8e8e8"/>
<rect x="206.60" y="12.90" width="1.2" height="1.2" fill="#e8e8e8"/>
<path d="M201.3 6.300000000000001 H205.7 M201.3 13.5 H205.7 M199.8 7.7 V12.100000000000001 M207.2 7.7 V12.100000000000001" stroke="#333" stroke-width="0.7" stroke-dasharray="0.8 0.8"/>
<rect x="215.30" y="5.70" width="1.2" height="1.2" fill="#e8e8e8"/>
<rect x="215.30" y="12.90" width="1.2" height="1.2" fill="#e8e8e8"/>
<rect x="222.70" y="5.70" width="1.2" height="1.2" fill="#e8e8e8"/>
<rect x="222.70" y="12.90" width="1.2" height="1.2" fill="#e8e8e8"/>
<path d="M217.4 6.300000000000001 H221.79999999999998 M217.4 13.5 H221.79999999999998 M215.9 7.7 V12.100000000000001 M223.29999999999998 7.7 V12.100000000000001" stroke="#333" stroke-width="0.7" stroke-dasharray="0.8 0.8"/>
<rect x="184.5" y="7.3" width="5.2" height="5.2" fill="#727272"/><rect x="185.9" y="8.6" width="2.5" height="2.5" fill="#b4e01e"/>
<rect x="200.9" y="7.3" width="5.2" height="5.2" fill="#8da42e"/>
<path d="M217.2 9.2 L220.2 7 L222.3 8.6 L222 11 L219.6 12.8 L217.4 12.2 Z" fill="none" stroke="#9cba2c" stroke-width="1.1" stroke-linejoin="round"/><circle cx="218.6" cy="10.8" r="0.9" fill="#9cba2c"/>
<rect x="258.2" y="6" width="2.3" height="2.3" fill="#4f4f4f"/><rect x="261.6" y="7" width="2.6" height="2.6" fill="#7c4236"/><rect x="259.4" y="9.3" width="2.6" height="2.6" fill="#7c4236"/><rect x="263" y="11.2" width="2.3" height="2.3" fill="#4f4f4f"/>
<rect x="277" y="8.8" width="4.7" height="4.9" fill="#7c4236"/><rect x="274" y="5.9" width="5.4" height="5.2" fill="#4f4f4f"/>
<rect x="290.5" y="5.9" width="4.9" height="4.8" fill="#4f4f4f"/><rect x="293" y="8.3" width="5.1" height="5.3" fill="#7c4236"/>
<rect x="307" y="6" width="2.6" height="2.6" fill="#4f4f4f"/><rect x="312.5" y="11" width="2.6" height="2.6" fill="#4f4f4f"/><rect x="308.4" y="7.2" width="4.8" height="5" fill="#7c4236"/>
<path d="M483 6.7 V13.4 H479.5 Z" fill="#2f586c"/><path d="M484 6.7 V13.4 H487.6 Z" fill="#525252"/>
<path d="M503.4 6.3 V9.6 H496.8 Z" fill="#2f586c"/><path d="M503.4 10.2 V13.4 L496.8 10.2 Z" fill="#525252"/>
<rect x="512.2" y="6" width="3.8" height="7.4" fill="#2f586c"/><path d="M516.4 6 H518.3 L519.7 7.6 V13.4 H516.4 Z" fill="#525252"/><rect x="517" y="9" width="1.5" height="2.2" fill="#333"/>
<rect x="529" y="6" width="3.5" height="7.4" fill="#2f586c"/><path d="M532.9 6 H535.7 V11 L534.5 12.2 H532.9 Z" fill="#525252"/><rect x="533.2" y="9.2" width="1.4" height="1.8" fill="#333"/>
<rect x="571.2" y="5.8" width="0.8" height="7.6" fill="#3f4f58"/><rect x="572.3" y="6.9" width="5.7" height="1.6" fill="#2f586c"/><rect x="572.3" y="10" width="3.5" height="1.6" fill="#2f586c"/>
<path d="M614.3 5.6 V12.6 M613.2 11.6 H621 M615 6.5 H620.2 V11 H615 Z" fill="none" stroke="#cfcfcf" stroke-width="0.9"/><rect x="615.4" y="6.9" width="4.4" height="3.8" fill="#9a9a9a"/><circle cx="616.6" cy="9.7" r="1.1" fill="#f01428"/>
<path d="M612.6 11.6 L614 10.6 V12.6 Z" fill="#e0e0e0"/>
<rect x="629" y="8" width="3.6" height="3.6" fill="#555"/><path d="M633.6 8.3 H636.6 V11.3 H633.6" fill="none" stroke="#6c2a36" stroke-width="0.9"/>
<path d="M647.4 9.8 L649.6 7.6 A2.1 2.1 0 0 1 652.6 10.6 L650.4 12.8" fill="none" stroke="#161616" stroke-width="2.5"/>
<path d="M647.4 9.8 L649.6 7.6 A2.1 2.1 0 0 1 652.6 10.6 L650.4 12.8" fill="none" stroke="#e8293d" stroke-width="1.6"/>
<path d="M646.9 10.3 L647.8 9.4 M649.9 13.3 L650.8 12.4" stroke="#f2f2f2" stroke-width="1.6"/>
<path d="M659.9 9.4 L661 10.8 L662.1 9.4" fill="none" stroke="#848484" stroke-width="0.9"/>
<rect x="694.3" y="6.2" width="5.2" height="4.8" fill="#2a5b70"/><circle cx="700.0" cy="11.4" r="2.8" fill="#2a5b70"/><circle cx="700.0" cy="11.4" r="1.5" fill="#3a3a3a" opacity="0.55"/>
<rect x="710.8" y="6.2" width="5.2" height="4.8" fill="#2a5b70"/><circle cx="716.5" cy="11.4" r="2.8" fill="#5a5a5a"/><circle cx="716.5" cy="11.4" r="1.5" fill="#3a3a3a" opacity="0.55"/>
<rect x="727" y="6.2" width="5.2" height="4.8" fill="#555"/><circle cx="732.7" cy="11.4" r="2.8" fill="#5a5a5a"/><circle cx="732.7" cy="11.4" r="1.5" fill="#3a3a3a" opacity="0.55"/><path d="M732.7 11.4 L730.3 9.4 L732.5 8.7 Z" fill="#2a5b70"/>
<rect x="743.4" y="6.2" width="5.2" height="4.8" fill="#2a5b70"/><circle cx="749.1" cy="11.4" r="2.8" fill="#2a5b70"/><circle cx="749.1" cy="11.4" r="1.5" fill="#3a3a3a" opacity="0.55"/><path d="M749.1 11.4 L746.8 9.5 L748.8 8.8 Z" fill="#666"/>
<rect x="759.6" y="6.2" width="5.2" height="4.8" fill="#2a5b70"/><circle cx="765.3000000000001" cy="11.4" r="2.8" fill="#2a5b70"/><circle cx="765.3000000000001" cy="11.4" r="1.5" fill="#3a3a3a" opacity="0.55"/>
<rect x="805.8" y="8.6" width="4.4" height="4.6" fill="#2acba4"/><circle cx="804.6" cy="8.7" r="3.1" fill="#a8a8a8"/><circle cx="804.6" cy="8.7" r="3.1" fill="none" stroke="#2a2a2a" stroke-width="0.5"/>
<circle cx="820.4" cy="8.6" r="3.1" fill="#a8a8a8"/><rect x="821.2" y="8" width="5.6" height="5.2" fill="#2acba4"/>
<circle cx="838.3" cy="9.5" r="3.8" fill="#a8a8a8"/><path d="M838.6 10 H842 L841 12.2 L838.6 13.2 Z" fill="#2acba4"/>
<circle cx="880.3" cy="8" r="2" fill="none" stroke="#3dd487" stroke-width="1"/><path d="M876.4 14.2 Q877 10.6 880.3 10.6 Q883.6 10.6 884.3 14.2" fill="none" stroke="#3dd487" stroke-width="1"/>
</svg>
<div class="abs" style="left:2.2px;top:24.4px;width:13px;height:12.6px;background:#222;border-radius:1px"></div>
<svg width="30" height="455" viewBox="0 0 30 455">
<path d="M5.6 26.9 L5.6 33.1 L7.3 31.8 L8.6 34.3 L9.8 33.7 L8.7 31.3 L11.7 31 Z" fill="none" stroke="#f0f0f0" stroke-width="0.8" stroke-linejoin="round"/>
<rect x="4.7" y="41" width="7.5" height="7.8" fill="#1b8f82" stroke="#a8b0b0" stroke-width="0.6"/><rect x="6.5" y="42.9" width="3.9" height="4" fill="#18284a"/><rect x="4" y="40.3" width="1.5" height="1.5" fill="#3fd8b8"/>
<path d="M5.8 55.2 L5.8 61.8 L7.6 60.4 L8.8 62.9 L10 62.3 L8.9 59.9 L11.5 59.6 Z" fill="#f4f4f4" stroke="#1c1c1c" stroke-width="0.5"/>
<path d="M14.2 62.5 V64.2 H12.5 Z" fill="#777"/>
<circle cx="8.3" cy="72.6" r="4.3" fill="none" stroke="#77756a" stroke-width="0.6" stroke-dasharray="1 0.6"/><circle cx="8.3" cy="72.6" r="3.1" fill="#4f68da"/><circle cx="8.3" cy="72.6" r="1.3" fill="#6a6248"/><path d="M10.8 70.2 L12.4 68.6 M11 68.3 H12.7 V70" stroke="#f0f0f0" stroke-width="0.8" fill="none"/>
<path d="M4 82.2 H10.4 V83.2 H5 V89.4 H4 Z" fill="#8a8a8a"/><rect x="5" y="83.2" width="3" height="2.6" fill="#6e6e6e"/><path d="M4.5 90.7 A8 7.2 0 0 1 12.6 83.5 L12.6 86.3 A5.3 4.4 0 0 0 7.3 90.7 Z" fill="#c2283c"/>
<path d="M14.2 90.5 V92.2 H12.5 Z" fill="#777"/>
<path d="M4.6 104.6 L5.4 100.4 L8.6 98 L11.4 100.8 L9 104 Z" fill="#e8e8e8" stroke="#555" stroke-width="0.5"/><path d="M9.4 97.4 L11 95.8 L13.4 98.2 L11.8 99.8 Z" fill="#e0503a"/><circle cx="7.8" cy="101.4" r="0.8" fill="#555"/>
<path d="M4.4 118.6 L5.4 115.6 L10.6 110.4 L12.8 112.6 L7.6 117.8 Z" fill="#e8c83a"/><path d="M10.6 110.4 L11.8 109.2 L14 111.4 L12.8 112.6 Z" fill="#d86a9a"/><path d="M4.4 118.6 L5.4 115.6 L7.6 117.8 Z" fill="#3a3a3a"/><path d="M5.6 117.4 L11.4 111.6" stroke="#a8902a" stroke-width="0.6"/>
<path d="M5 124.4 L12 133 M12 124.4 L5 133" stroke="#8a8a8a" stroke-width="0.9"/><path d="M4.6 132.6 Q5.2 129 8.4 126.4 L11.6 124.2 Q13 124.6 12.6 126 L10.4 129.2 Q7.8 132.4 4.6 132.6 Z" fill="#f0782a"/>
<path d="M9 141.4 L11.6 137.6 Q13.2 137 13.4 138.8 L10.8 143 Z" fill="#2a9af0"/><path d="M5 147 Q4.8 144.2 7 142.6 L9 141.4 L10.8 143 L9.6 145 Q7.6 147.4 5 147 Z" fill="#a86a4a"/><path d="M9.6 147.2 L10.8 143.6 L12.2 147.2 Z" fill="#d8d8d8"/><path d="M4.4 147.6 L6.2 145.8" stroke="#ddd" stroke-width="0.8"/>
<path d="M4 161.4 L7.6 156.4 L9.4 157.8 L5 161.8 Z" fill="#b0b0b0"/><ellipse cx="10" cy="154.8" rx="3.4" ry="1.9" transform="rotate(-52 10 154.8)" fill="#c07a5a"/>
<path d="M5.4 168.4 L9 165.6 L12.8 169.6 L9.2 173.6 L5.6 172.4 Z" fill="#c8c8c8"/><path d="M8 166.4 L10.2 164.6 L12.6 166.8 L11 168.4 Z" fill="#3a7ac0"/><path d="M4.6 170 Q3.6 172 4.8 173 Q5.8 172 4.6 170 Z" fill="#e8e8e8"/><path d="M6.4 169.4 L11.6 170.4" stroke="#666" stroke-width="0.7"/>
<path d="M14.2 173.5 V175.2 H12.5 Z" fill="#777"/>
<path d="M4.6 181.2 L12.6 189.6" stroke="#8a8a8a" stroke-width="0.9"/>
<path d="M4.4 186.6 L7.4 183.2" stroke="#38a0ea" stroke-width="2.2" stroke-linecap="round"/><path d="M7.4 183.2 L9.8 180.6" stroke="#ead8a8" stroke-width="2.2" stroke-linecap="round"/>
<path d="M6.8 189.4 L9.8 186" stroke="#38a0ea" stroke-width="2.2" stroke-linecap="round"/><path d="M9.8 186 L12.4 183.2" stroke="#ead8a8" stroke-width="2.2" stroke-linecap="round"/>
<path d="M14.2 187.5 V189.2 H12.5 Z" fill="#777"/>
<rect x="4.1" y="194.8" width="9.1" height="7.2" fill="#3587c4"/><rect x="4.1" y="199" width="9.1" height="3" fill="#245f8c"/><path d="M4.8 199.2 L7 196.4 L8.6 198 L10.4 196.2 L12.6 199.2 Z" fill="#e4edf4"/>
<path d="M6.3 207.8 V215.2 H13 M4.2 209.9 H10.9 V217.2" fill="none" stroke="#ececec" stroke-width="1.15"/>
<rect x="5.2" y="222.6" width="7.2" height="7" fill="#27393a" stroke="#a6a6a6" stroke-width="1.1"/>
<path d="M14.2 229.5 V231.2 H12.5 Z" fill="#777"/>
<circle cx="8.3" cy="240.7" r="3.6" fill="#262e2e" stroke="#a8a8a8" stroke-width="1.3"/><path d="M7.5 240.7 H9.1 M8.3 239.9 V241.5" stroke="#8a8a8a" stroke-width="0.5"/>
<path d="M8.3 251.4 L12 258.6 H4.6 Z" fill="#262e2e" stroke="#a8a8a8" stroke-width="1.3" stroke-linejoin="round"/>
<path d="M14.2 258.5 V260.2 H12.5 Z" fill="#777"/>
<circle cx="7.2" cy="267.2" r="3.2" fill="none" stroke="#2f6aa8" stroke-width="0.9"/><rect x="5.6" y="266" width="7" height="6.8" fill="#1f8578"/><path d="M7.2 266.8 L11.6 268.4 L7.8 271.6 Z" fill="#3ae870"/>
<rect x="4.5" y="278.3" width="8.2" height="8.4" fill="#26394a" stroke="#2f74b0" stroke-width="0.9" stroke-dasharray="1.2 0.7"/><path d="M6.3 285.2 L8.6 279.8 L10.9 285.2 M7.2 283.4 H10" fill="none" stroke="#dcdcdc" stroke-width="1.05"/>
<path d="M14.2 286.5 V288.2 H12.5 Z" fill="#777"/>
<path d="M4.3 300.6 L8.8 295.4 L10 296.5 L5.6 301.6 Z" fill="#e6e6e6"/><ellipse cx="10.6" cy="294.4" rx="2.5" ry="2" transform="rotate(-40 10.6 294.4)" fill="#c88666"/>
<path d="M14.2 300.5 V302.2 H12.5 Z" fill="#777"/>
<rect x="4" y="306" width="5" height="9.2" fill="#3a1c20"/><rect x="4.7" y="306.5" width="3.5" height="8.4" rx="0.6" fill="#2cba92"/><rect x="9.1" y="306.5" width="3.4" height="8.4" rx="0.6" fill="#25a884" stroke="#e0602a" stroke-width="0.6" stroke-dasharray="0.9 0.6"/><path d="M6.4 307.6 V314 M10.8 307.6 V314" stroke="#5fe0b8" stroke-width="0.6" stroke-dasharray="0.7 0.9"/>
<path d="M14.2 314.5 V316.2 H12.5 Z" fill="#777"/>
<rect x="2" y="320.6" width="13.4" height="0.8" fill="#4a4a4a"/>
<path d="M4.2 331.6 L4.8 328.4 L6 327.8 L6.4 326.6 L7.8 326.2 L8.4 326.8 L9.6 326.6 L10.2 327.4 L11.4 327.8 L11.6 331 L12.2 330.2 L13 330.8 L11.6 334.6 L9.8 336.2 L7 336 L5 334.2 Z" fill="#ead2b8" stroke="#141414" stroke-width="1" stroke-linejoin="round"/><path d="M6.6 328 V331 M8.2 327.4 V331 M9.8 327.8 V331" stroke="#b89a80" stroke-width="0.4"/>
<path d="M14.2 336.5 V338.2 H12.5 Z" fill="#777"/>
<circle cx="8.8" cy="346.4" r="5.2" fill="#3a3a3a" stroke="#0e0e0e" stroke-width="2.2"/><circle cx="8.8" cy="353.8" r="6.4" fill="#7e7e7e"/>
<path d="M5.8 362 L8.8 364.6 L11.8 362" fill="none" stroke="#747474" stroke-width="1.3"/>
</svg>
<div class="abs" style="left:771px;top:21px;width:124px;height:12.7px;background:#292929;"></div>
<div class="abs" style="left:797.3px;top:21px;width:0.8px;height:12.7px;background:#232323;"></div>
<div class="abs" style="left:798px;top:21px;width:27.8px;height:12.7px;background:#383838;"></div>
<div class="abs" style="left:825.8px;top:21px;width:1px;height:12.7px;background:#222;"></div>
<div class="abs" style="left:845.2px;top:21px;width:1.4px;height:12.7px;background:#222;"></div>
<div class="abs" style="left:878.4px;top:21px;width:1.2px;height:12.7px;background:#232323;"></div>
<div class="abs" style="left:774.3px;top:25.6px;width:2.8px;height:4px;background:#3c3c3c;"></div>
<div class="t" style="left:782.70px;top:25.00px;font-size:5.3px;color:#c6c6c6;transform-origin:0 0;transform:perspective(1000px) translate3d(0,0.60px,0) scaleX(0.9238)">Color</div>
<div class="t" style="left:800.50px;top:25.00px;font-size:5.3px;color:#ffffff;font-weight:bold;text-shadow:0 0 1px rgba(0,0,0,.85),0 0 1.5px rgba(0,0,0,.6);transform-origin:0 0;transform:perspective(1000px) translate3d(0,0.60px,0) scaleX(0.8875)">Swatches</div>
<div class="t" style="left:827.90px;top:25.00px;font-size:5.3px;color:#b8b8b8;transform-origin:0 0;transform:perspective(1000px) translate3d(0,0.60px,0) scaleX(0.9596)">Stroke</div>
<div class="t" style="left:848.40px;top:25.00px;font-size:5.3px;color:#c6c6c6;transform-origin:0 0;transform:perspective(1000px) translate3d(0,0.60px,0) scaleX(0.9411)">Appearance</div>
<div class="abs" style="left:863.8px;top:42px;width:27px;height:9.4px;background:#242424;border-radius:1px"></div>
<div class="abs" style="left:885.4px;top:42px;width:0.6px;height:9.4px;background:#383838;"></div>
<div class="abs" style="left:886px;top:42px;width:4.8px;height:9.4px;background:#2b2b2b;border-radius:0 1px 1px 0"></div>
<div class="t" style="left:840.40px;top:44.00px;font-size:5.3px;color:#b0b0b0;transform-origin:0 0;transform:scaleX(0.9619)">Opacity:</div>
<div class="t" style="left:864.80px;top:44.00px;font-size:5.3px;color:#f0f0f0;font-weight:bold;text-shadow:0 0 1px rgba(0,0,0,.85),0 0 1.5px rgba(0,0,0,.6);transform-origin:0 0;transform:scaleX(0.9382)">100 %</div>
<div class="t" style="left:775.00px;top:65.00px;font-size:5.5px;color:#b0b0b0;transform-origin:0 0;transform:perspective(1000px) translate3d(0,0.60px,0) scaleX(0.9285)">Recent:</div>
<div class="abs" style="left:796px;top:64.3px;width:61px;height:6.6px;background:#2c2c2c;"></div>
<div class="abs" style="left:796.4px;top:64.5px;width:6.1px;height:6.2px;background:#8a8a8a;"></div>
<div class="abs" style="left:802.6999999999999px;top:64.5px;width:6.1px;height:6.2px;background:#8fe42c;"></div>
<div class="abs" style="left:809.0px;top:64.5px;width:6.1px;height:6.2px;background:#7a4ab4;"></div>
<div class="abs" style="left:815.3px;top:64.5px;width:6.1px;height:6.2px;background:#f0f0f0;"></div>
<div class="abs" style="left:775px;top:74.6px;width:64.8px;height:8.8px;background:#454545;border-radius:1px"></div>
<div class="t" style="left:786.60px;top:77.00px;font-size:5.4px;color:#e6e6e6;font-weight:bold;text-shadow:0 0 1px rgba(0,0,0,.85),0 0 1.5px rgba(0,0,0,.6);transform-origin:0 0;transform:scaleX(0.8420)">Colors</div>
<div class="abs" style="left:775.8000000000001px;top:85.8px;width:103.875px;height:55.5px;background:#202020;"></div>
<svg width="895" height="455" viewBox="0 0 895 455"><rect x="776.28" y="86.28" width="5.71" height="5.74" fill="#eb1212"/><rect x="782.36" y="86.28" width="5.71" height="5.74" fill="#eb5f12"/><rect x="788.43" y="86.28" width="5.71" height="5.74" fill="#ebac12"/><rect x="794.50" y="86.28" width="5.71" height="5.74" fill="#dfeb12"/><rect x="800.58" y="86.28" width="5.71" height="5.74" fill="#92eb12"/><rect x="806.65" y="86.28" width="5.71" height="5.74" fill="#45eb12"/><rect x="812.73" y="86.28" width="5.71" height="5.74" fill="#12eb2c"/><rect x="818.80" y="86.28" width="5.71" height="5.74" fill="#12eb78"/><rect x="824.88" y="86.28" width="5.71" height="5.74" fill="#12ebc5"/><rect x="830.95" y="86.28" width="5.71" height="5.74" fill="#12c5eb"/><rect x="837.03" y="86.28" width="5.71" height="5.74" fill="#1278eb"/><rect x="843.11" y="86.28" width="5.71" height="5.74" fill="#122ceb"/><rect x="849.18" y="86.28" width="5.71" height="5.74" fill="#4512eb"/><rect x="855.25" y="86.28" width="5.71" height="5.74" fill="#9212eb"/><rect x="861.33" y="86.28" width="5.71" height="5.74" fill="#df12eb"/><rect x="867.40" y="86.28" width="5.71" height="5.74" fill="#eb12ac"/><rect x="873.48" y="86.28" width="5.71" height="5.74" fill="#eb125f"/><rect x="776.28" y="92.38" width="5.71" height="5.74" fill="#e02020"/><rect x="782.36" y="92.38" width="5.71" height="5.74" fill="#e06320"/><rect x="788.43" y="92.38" width="5.71" height="5.74" fill="#e0a720"/><rect x="794.50" y="92.38" width="5.71" height="5.74" fill="#d4e020"/><rect x="800.58" y="92.38" width="5.71" height="5.74" fill="#91e020"/><rect x="806.65" y="92.38" width="5.71" height="5.74" fill="#4de020"/><rect x="812.73" y="92.38" width="5.71" height="5.74" fill="#20e036"/><rect x="818.80" y="92.38" width="5.71" height="5.74" fill="#20e07a"/><rect x="824.88" y="92.38" width="5.71" height="5.74" fill="#20e0be"/><rect x="830.95" y="92.38" width="5.71" height="5.74" fill="#20bee0"/><rect x="837.03" y="92.38" width="5.71" height="5.74" fill="#207ae0"/><rect x="843.11" y="92.38" width="5.71" height="5.74" fill="#2036e0"/><rect x="849.18" y="92.38" width="5.71" height="5.74" fill="#4d20e0"/><rect x="855.25" y="92.38" width="5.71" height="5.74" fill="#9120e0"/><rect x="861.33" y="92.38" width="5.71" height="5.74" fill="#d420e0"/><rect x="867.40" y="92.38" width="5.71" height="5.74" fill="#e020a7"/><rect x="873.48" y="92.38" width="5.71" height="5.74" fill="#e02063"/><rect x="776.28" y="98.48" width="5.71" height="5.74" fill="#d42d2d"/><rect x="782.36" y="98.48" width="5.71" height="5.74" fill="#d4682d"/><rect x="788.43" y="98.48" width="5.71" height="5.74" fill="#d4a32d"/><rect x="794.50" y="98.48" width="5.71" height="5.74" fill="#cad42d"/><rect x="800.58" y="98.48" width="5.71" height="5.74" fill="#8fd42d"/><rect x="806.65" y="98.48" width="5.71" height="5.74" fill="#54d42d"/><rect x="812.73" y="98.48" width="5.71" height="5.74" fill="#2dd441"/><rect x="818.80" y="98.48" width="5.71" height="5.74" fill="#2dd47b"/><rect x="824.88" y="98.48" width="5.71" height="5.74" fill="#2dd4b6"/><rect x="830.95" y="98.48" width="5.71" height="5.74" fill="#2db6d4"/><rect x="837.03" y="98.48" width="5.71" height="5.74" fill="#2d7bd4"/><rect x="843.11" y="98.48" width="5.71" height="5.74" fill="#2d41d4"/><rect x="849.18" y="98.48" width="5.71" height="5.74" fill="#542dd4"/><rect x="855.25" y="98.48" width="5.71" height="5.74" fill="#8f2dd4"/><rect x="861.33" y="98.48" width="5.71" height="5.74" fill="#ca2dd4"/><rect x="867.40" y="98.48" width="5.71" height="5.74" fill="#d42da3"/><rect x="873.48" y="98.48" width="5.71" height="5.74" fill="#d42d68"/><rect x="776.28" y="104.58" width="5.71" height="5.74" fill="#c83a3a"/><rect x="782.36" y="104.58" width="5.71" height="5.74" fill="#c86c3a"/><rect x="788.43" y="104.58" width="5.71" height="5.74" fill="#c89e3a"/><rect x="794.50" y="104.58" width="5.71" height="5.74" fill="#bfc83a"/><rect x="800.58" y="104.58" width="5.71" height="5.74" fill="#8ec83a"/><rect x="806.65" y="104.58" width="5.71" height="5.74" fill="#5cc83a"/><rect x="812.73" y="104.58" width="5.71" height="5.74" fill="#3ac84b"/><rect x="818.80" y="104.58" width="5.71" height="5.74" fill="#3ac87d"/><rect x="824.88" y="104.58" width="5.71" height="5.74" fill="#3ac8af"/><rect x="830.95" y="104.58" width="5.71" height="5.74" fill="#3aafc8"/><rect x="837.03" y="104.58" width="5.71" height="5.74" fill="#3a7dc8"/><rect x="843.11" y="104.58" width="5.71" height="5.74" fill="#3a4bc8"/><rect x="849.18" y="104.58" width="5.71" height="5.74" fill="#5c3ac8"/><rect x="855.25" y="104.58" width="5.71" height="5.74" fill="#8e3ac8"/><rect x="861.33" y="104.58" width="5.71" height="5.74" fill="#bf3ac8"/><rect x="867.40" y="104.58" width="5.71" height="5.74" fill="#c83a9e"/><rect x="873.48" y="104.58" width="5.71" height="5.74" fill="#c83a6c"/><rect x="776.28" y="110.68" width="5.71" height="5.74" fill="#bc4848"/><rect x="782.36" y="110.68" width="5.71" height="5.74" fill="#bc7148"/><rect x="788.43" y="110.68" width="5.71" height="5.74" fill="#bc9a48"/><rect x="794.50" y="110.68" width="5.71" height="5.74" fill="#b5bc48"/><rect x="800.58" y="110.68" width="5.71" height="5.74" fill="#8cbc48"/><rect x="806.65" y="110.68" width="5.71" height="5.74" fill="#63bc48"/><rect x="812.73" y="110.68" width="5.71" height="5.74" fill="#48bc56"/><rect x="818.80" y="110.68" width="5.71" height="5.74" fill="#48bc7e"/><rect x="824.88" y="110.68" width="5.71" height="5.74" fill="#48bca7"/><rect x="830.95" y="110.68" width="5.71" height="5.74" fill="#48a7bc"/><rect x="837.03" y="110.68" width="5.71" height="5.74" fill="#487ebc"/><rect x="843.11" y="110.68" width="5.71" height="5.74" fill="#4856bc"/><rect x="849.18" y="110.68" width="5.71" height="5.74" fill="#6348bc"/><rect x="855.25" y="110.68" width="5.71" height="5.74" fill="#8c48bc"/><rect x="861.33" y="110.68" width="5.71" height="5.74" fill="#b548bc"/><rect x="867.40" y="110.68" width="5.71" height="5.74" fill="#bc489a"/><rect x="873.48" y="110.68" width="5.71" height="5.74" fill="#bc4871"/><rect x="776.28" y="116.78" width="5.71" height="5.74" fill="#b05555"/><rect x="782.36" y="116.78" width="5.71" height="5.74" fill="#b07555"/><rect x="788.43" y="116.78" width="5.71" height="5.74" fill="#b09555"/><rect x="794.50" y="116.78" width="5.71" height="5.74" fill="#abb055"/><rect x="800.58" y="116.78" width="5.71" height="5.74" fill="#8bb055"/><rect x="806.65" y="116.78" width="5.71" height="5.74" fill="#6bb055"/><rect x="812.73" y="116.78" width="5.71" height="5.74" fill="#55b060"/><rect x="818.80" y="116.78" width="5.71" height="5.74" fill="#55b080"/><rect x="824.88" y="116.78" width="5.71" height="5.74" fill="#55b0a0"/><rect x="830.95" y="116.78" width="5.71" height="5.74" fill="#55a0b0"/><rect x="837.03" y="116.78" width="5.71" height="5.74" fill="#5580b0"/><rect x="843.11" y="116.78" width="5.71" height="5.74" fill="#5560b0"/><rect x="849.18" y="116.78" width="5.71" height="5.74" fill="#6b55b0"/><rect x="855.25" y="116.78" width="5.71" height="5.74" fill="#8b55b0"/><rect x="861.33" y="116.78" width="5.71" height="5.74" fill="#ab55b0"/><rect x="867.40" y="116.78" width="5.71" height="5.74" fill="#b05595"/><rect x="873.48" y="116.78" width="5.71" height="5.74" fill="#b05575"/><rect x="776.28" y="122.88" width="5.71" height="5.74" fill="#a46363"/><rect x="782.36" y="122.88" width="5.71" height="5.74" fill="#a47a63"/><rect x="788.43" y="122.88" width="5.71" height="5.74" fill="#a49163"/><rect x="794.50" y="122.88" width="5.71" height="5.74" fill="#a0a463"/><rect x="800.58" y="122.88" width="5.71" height="5.74" fill="#89a463"/><rect x="806.65" y="122.88" width="5.71" height="5.74" fill="#72a463"/><rect x="812.73" y="122.88" width="5.71" height="5.74" fill="#63a46a"/><rect x="818.80" y="122.88" width="5.71" height="5.74" fill="#63a481"/><rect x="824.88" y="122.88" width="5.71" height="5.74" fill="#63a499"/><rect x="830.95" y="122.88" width="5.71" height="5.74" fill="#6399a4"/><rect x="837.03" y="122.88" width="5.71" height="5.74" fill="#6381a4"/><rect x="843.11" y="122.88" width="5.71" height="5.74" fill="#636aa4"/><rect x="849.18" y="122.88" width="5.71" height="5.74" fill="#7263a4"/><rect x="855.25" y="122.88" width="5.71" height="5.74" fill="#8963a4"/><rect x="861.33" y="122.88" width="5.71" height="5.74" fill="#a063a4"/><rect x="867.40" y="122.88" width="5.71" height="5.74" fill="#a46391"/><rect x="873.48" y="122.88" width="5.71" height="5.74" fill="#a4637a"/><rect x="776.28" y="128.98" width="5.71" height="5.74" fill="#987070"/><rect x="782.36" y="128.98" width="5.71" height="5.74" fill="#987e70"/><rect x="788.43" y="128.98" width="5.71" height="5.74" fill="#988c70"/><rect x="794.50" y="128.98" width="5.71" height="5.74" fill="#969870"/><rect x="800.58" y="128.98" width="5.71" height="5.74" fill="#889870"/><rect x="806.65" y="128.98" width="5.71" height="5.74" fill="#799870"/><rect x="812.73" y="128.98" width="5.71" height="5.74" fill="#709875"/><rect x="818.80" y="128.98" width="5.71" height="5.74" fill="#709883"/><rect x="824.88" y="128.98" width="5.71" height="5.74" fill="#709891"/><rect x="830.95" y="128.98" width="5.71" height="5.74" fill="#709198"/><rect x="837.03" y="128.98" width="5.71" height="5.74" fill="#708398"/><rect x="843.11" y="128.98" width="5.71" height="5.74" fill="#707598"/><rect x="849.18" y="128.98" width="5.71" height="5.74" fill="#797098"/><rect x="855.25" y="128.98" width="5.71" height="5.74" fill="#887098"/><rect x="861.33" y="128.98" width="5.71" height="5.74" fill="#967098"/><rect x="867.40" y="128.98" width="5.71" height="5.74" fill="#98708c"/><rect x="873.48" y="128.98" width="5.71" height="5.74" fill="#98707e"/><rect x="776.28" y="135.08" width="5.71" height="5.74" fill="#8d7d7d"/><rect x="782.36" y="135.08" width="5.71" height="5.74" fill="#8d837d"/><rect x="788.43" y="135.08" width="5.71" height="5.74" fill="#8d887d"/><rect x="794.50" y="135.08" width="5.71" height="5.74" fill="#8c8d7d"/><rect x="800.58" y="135.08" width="5.71" height="5.74" fill="#868d7d"/><rect x="806.65" y="135.08" width="5.71" height="5.74" fill="#818d7d"/><rect x="812.73" y="135.08" width="5.71" height="5.74" fill="#7d8d7f"/><rect x="818.80" y="135.08" width="5.71" height="5.74" fill="#7d8d84"/><rect x="824.88" y="135.08" width="5.71" height="5.74" fill="#7d8d8a"/><rect x="830.95" y="135.08" width="5.71" height="5.74" fill="#7d8a8d"/><rect x="837.03" y="135.08" width="5.71" height="5.74" fill="#7d848d"/><rect x="843.11" y="135.08" width="5.71" height="5.74" fill="#7d7f8d"/><rect x="849.18" y="135.08" width="5.71" height="5.74" fill="#817d8d"/><rect x="855.25" y="135.08" width="5.71" height="5.74" fill="#867d8d"/><rect x="861.33" y="135.08" width="5.71" height="5.74" fill="#8c7d8d"/><rect x="867.40" y="135.08" width="5.71" height="5.74" fill="#8d7d88"/><rect x="873.48" y="135.08" width="5.71" height="5.74" fill="#8d7d83"/>
<rect x="885.8" y="24.6" width="5.6" height="1.15" fill="#d0d0d0"/>
<rect x="885.8" y="26.9" width="5.6" height="1.15" fill="#d0d0d0"/>
<rect x="885.8" y="29.2" width="5.6" height="1.15" fill="#d0d0d0"/>
<circle cx="782.7" cy="44.7" r="5.15" fill="#474747" stroke="#080808" stroke-width="1.9"/>
<circle cx="787.3" cy="49.4" r="5.8" fill="#7b7b7b"/>
<circle cx="777.9" cy="53.7" r="3" fill="#f2f2f2" stroke="#141414" stroke-width="0.7"/><path d="M776 55.6 L779.8 51.8" stroke="#e0202a" stroke-width="1.1"/>
<path d="M789.2 38.7 Q792.8 39 793.2 42.4" fill="none" stroke="#9a9a9a" stroke-width="1.2"/><path d="M791.9 41.4 L793.3 43.2 L794.5 41.2 Z M790.2 37.4 L788.4 38.6 L790.2 40 Z" fill="#9a9a9a"/>
<path d="M798 46.4 L802.4 41.4 L803.6 42.5 L799.2 47.4 Z" fill="#e4e4e4" stroke="#1c1c1c" stroke-width="0.4"/><ellipse cx="804.4" cy="40.1" rx="2.5" ry="2" transform="rotate(-40 804.4 40.1)" fill="#c8815e" stroke="#1c1c1c" stroke-width="0.4"/>
<circle cx="810.4" cy="42" r="3" fill="#f4f4f4" stroke="#202020" stroke-width="0.6"/>
<path d="M887 45.9 L888.3 47.4 L889.6 45.9" fill="none" stroke="#8a8a8a" stroke-width="0.8"/>
<g fill="none" stroke="#b4b4b4" stroke-width="1.05"><rect x="778" y="79.2" width="3.6" height="2.3" rx="1.1" transform="rotate(-42 779.8 80.35)"/><rect x="780.9" y="76.6" width="3.6" height="2.3" rx="1.1" transform="rotate(-42 782.7 77.75)"/></g>
<path d="M835.4 78.2 L836.4 77 L837.4 78.2 M835.4 80 L836.4 81.2 L837.4 80" fill="none" stroke="#8a8a8a" stroke-width="0.6"/>
<rect x="844.3" y="75.4" width="3" height="3" rx="0.8" fill="#e8e8e8"/>
<rect x="848" y="75.4" width="3" height="3" rx="0.8" fill="#e8e8e8"/>
<rect x="844.3" y="79.2" width="3" height="3" rx="0.8" fill="#e8e8e8"/>
<rect x="848" y="79.2" width="3" height="3" rx="0.8" fill="#e8e8e8"/>
<rect x="849.2" y="76.2" width="1" height="1.4" fill="#383838"/>
<rect x="866.2" y="76" width="6.4" height="6.6" fill="#f4f4f4"/><path d="M866.6 82.2 L872.2 76.4" stroke="#e0202a" stroke-width="0.9"/>
<rect x="874.8" y="76" width="2.2" height="6.6" fill="#111"/><rect x="878" y="76" width="6.4" height="6.6" fill="#808080"/><rect x="884.4" y="76" width="6.6" height="6.6" fill="#f4f4f4"/>
</svg>
<div class="abs" style="left:776px;top:161px;width:114.3px;height:7.7px;background:#222;border-radius:1px"></div>
<svg width="895" height="455" viewBox="0 0 895 455"><circle cx="780.2" cy="164.4" r="1.5" fill="none" stroke="#d0d0d0" stroke-width="0.8"/><path d="M781.3 165.6 L782.8 167.2" stroke="#d0d0d0" stroke-width="0.9"/></svg>
<div class="abs" style="left:771px;top:173.6px;width:124px;height:13px;background:#292929;"></div>
<div class="abs" style="left:807.4px;top:173.6px;width:0.8px;height:13px;background:#232323;"></div>
<div class="abs" style="left:808.2px;top:173.6px;width:20.9px;height:13px;background:#383838;"></div>
<div class="abs" style="left:829.1px;top:173.6px;width:1px;height:13px;background:#222;"></div>
<div class="abs" style="left:856.4px;top:173.6px;width:1.4px;height:13px;background:#222;"></div>
<div class="abs" style="left:880.4px;top:173.6px;width:1.2px;height:13px;background:#232323;"></div>
<div class="abs" style="left:774.3px;top:178.2px;width:2.8px;height:4px;background:#3c3c3c;"></div>
<div class="t" style="left:782.90px;top:178.00px;font-size:5.3px;color:#c6c6c6;transform-origin:0 0;transform:scaleX(0.9497)">Character</div>
<div class="t" style="left:811.00px;top:178.00px;font-size:5.3px;color:#ffffff;font-weight:bold;text-shadow:0 0 1px rgba(0,0,0,.85),0 0 1.5px rgba(0,0,0,.6);transform-origin:0 0;transform:scaleX(0.8660)">Layers</div>
<div class="t" style="left:831.60px;top:178.00px;font-size:5.3px;color:#c6c6c6;transform-origin:0 0;transform:scaleX(0.9477)">Transform</div>
<div class="t" style="left:859.80px;top:178.00px;font-size:5.3px;color:#c6c6c6;transform-origin:0 0;transform:scaleX(0.9360)">Brushes</div>
<div class="t" style="left:774.00px;top:192.00px;font-size:5.3px;color:#b0b0b0;transform-origin:0 0;transform:perspective(1000px) translate3d(0,0.60px,0) scaleX(0.9465)">Opacity:</div>
<div class="abs" style="left:795px;top:190.1px;width:25.8px;height:9.3px;background:#3e3e3e;border-radius:1px"></div>
<div class="t" style="left:796.30px;top:192.00px;font-size:5.3px;color:#8a8a8a;transform-origin:0 0;transform:perspective(1000px) translate3d(0,0.60px,0) scaleX(0.8917)">100 %</div>
<div class="abs" style="left:822.8px;top:190.1px;width:49px;height:9.3px;background:#3e3e3e;border-radius:1px"></div>
<div class="t" style="left:824.50px;top:192.00px;font-size:5.3px;color:#8a8a8a;transform-origin:0 0;transform:perspective(1000px) translate3d(0,0.60px,0) scaleX(0.9426)">Normal</div>
<div class="abs" style="left:771px;top:202.4px;width:124px;height:231.2px;background:#1d1d1d;"></div>
<div class="abs" style="left:771px;top:202.4px;width:124px;height:17.25px;background:#343434;"></div>
<div class="abs" style="left:771px;top:219.1px;width:124px;height:0.6px;background:#2a2a2a;"></div>
<div class="abs" style="left:779.3px;top:202.4px;width:0.5px;height:17.25px;background:#2c2c2c;"></div>
<div class="abs" style="left:779.6px;top:202.8px;width:17px;height:16.3px;background:#2a2a2a;"></div>
<div class="t" style="left:801.70px;top:209.00px;font-size:5.4px;color:#6e6e6e;transform-origin:0 0;transform:scaleX(0.9178)">Ellipse</div>
<div class="abs" style="left:771px;top:219.65px;width:124px;height:17.25px;background:#343434;"></div>
<div class="abs" style="left:771px;top:236.35px;width:124px;height:0.6px;background:#2a2a2a;"></div>
<div class="abs" style="left:779.3px;top:219.65px;width:0.5px;height:17.25px;background:#2c2c2c;"></div>
<div class="abs" style="left:779.6px;top:220.05px;width:17px;height:16.3px;background:#2a2a2a;"></div>
<div class="t" style="left:801.70px;top:226.00px;font-size:5.4px;color:#6e6e6e;transform-origin:0 0;transform:perspective(1000px) translate3d(0,0.35px,0) scaleX(0.9062)">Curves</div>
<div class="abs" style="left:771px;top:236.9px;width:124px;height:17.25px;background:#343434;"></div>
<div class="abs" style="left:771px;top:253.6px;width:124px;height:0.6px;background:#2a2a2a;"></div>
<div class="abs" style="left:779.3px;top:236.9px;width:0.5px;height:17.25px;background:#2c2c2c;"></div>
<div class="abs" style="left:779.6px;top:237.3px;width:17px;height:16.3px;background:#2a2a2a;"></div>
<div class="t" style="left:801.70px;top:243.00px;font-size:5.4px;color:#6e6e6e;transform-origin:0 0;transform:perspective(1000px) translate3d(0,0.60px,0) scaleX(0.9164)">Curve</div>
<div class="abs" style="left:771px;top:254.15px;width:124px;height:17.25px;background:#343434;"></div>
<div class="abs" style="left:771px;top:270.85px;width:124px;height:0.6px;background:#2a2a2a;"></div>
<div class="abs" style="left:779.3px;top:254.15px;width:0.5px;height:17.25px;background:#2c2c2c;"></div>
<div class="abs" style="left:779.6px;top:254.55px;width:17px;height:16.3px;background:#2a2a2a;"></div>
<div class="t" style="left:801.70px;top:261.00px;font-size:5.4px;color:#6e6e6e;transform-origin:0 0;transform:scaleX(0.9212)">Rectangle</div>
<div class="abs" style="left:771px;top:271.4px;width:124px;height:17.25px;background:#343434;"></div>
<div class="abs" style="left:771px;top:288.09999999999997px;width:124px;height:0.6px;background:#2a2a2a;"></div>
<div class="abs" style="left:779.3px;top:271.4px;width:0.5px;height:17.25px;background:#2c2c2c;"></div>
<div class="abs" style="left:779.6px;top:271.79999999999995px;width:17px;height:16.3px;background:#2a2a2a;"></div>
<div class="t" style="left:801.70px;top:278.00px;font-size:5.4px;color:#6e6e6e;transform-origin:0 0;transform:scaleX(0.8800)">Pixel</div>
<div class="abs" style="left:771px;top:288.65px;width:124px;height:17.25px;background:#343434;"></div>
<div class="abs" style="left:771px;top:305.34999999999997px;width:124px;height:0.6px;background:#2a2a2a;"></div>
<div class="abs" style="left:779.3px;top:288.65px;width:0.5px;height:17.25px;background:#2c2c2c;"></div>
<div class="abs" style="left:779.6px;top:289.04999999999995px;width:17px;height:16.3px;background:#2a2a2a;"></div>
<div class="t" style="left:801.70px;top:295.00px;font-size:5.4px;color:#ffffff;font-weight:bold;text-shadow:0 0 1px rgba(0,0,0,.85),0 0 1.5px rgba(0,0,0,.6);transform-origin:0 0;transform:perspective(1000px) translate3d(0,0.35px,0) scaleX(0.8570)">Background</div>
<svg width="895" height="455" viewBox="0 0 895 455">
<circle cx="885.8" cy="210.90" r="2.05" fill="#ababab"/>
<circle cx="885.8" cy="228.15" r="2.05" fill="#ababab"/>
<circle cx="885.8" cy="245.40" r="2.05" fill="#ababab"/>
<circle cx="885.8" cy="262.65" r="2.05" fill="#ababab"/>
<circle cx="885.8" cy="279.90" r="2.05" fill="#ababab"/>
<circle cx="885.8" cy="297.15" r="2.05" fill="#464646"/>
<rect x="773.2" y="208.3" width="1.8" height="1.8" fill="#b8b8b8"/><rect x="775.4" y="209.70000000000002" width="1.8" height="1.8" fill="#b8b8b8"/><rect x="773.2" y="211.5" width="1.8" height="1.8" fill="#b8b8b8"/><rect x="776.2" y="212.5" width="1.4" height="1.4" fill="#b8b8b8"/>
<path d="M774.2 225.35 V230.95000000000002 M774.6 228.15 Q776.4 227.75 777 225.55 M774.6 228.15 Q776.4 228.55 777 230.75" fill="none" stroke="#8a8a8a" stroke-width="0.85"/>
<path d="M774.2 242.6 V248.20000000000002 M774.6 245.4 Q776.4 245.0 777 242.8 M774.6 245.4 Q776.4 245.8 777 248.0" fill="none" stroke="#8a8a8a" stroke-width="0.85"/>
<rect x="773.2" y="260.04999999999995" width="1.8" height="1.8" fill="#b8b8b8"/><rect x="775.4" y="261.45" width="1.8" height="1.8" fill="#b8b8b8"/><rect x="773.2" y="263.25" width="1.8" height="1.8" fill="#b8b8b8"/><rect x="776.2" y="264.25" width="1.4" height="1.4" fill="#b8b8b8"/>
<path d="M773.6 277.7 H776.6 M773.6 279.9 H776.6 M773.6 282.09999999999997 H776.6" stroke="#8c8c8c" stroke-width="1.2"/><path d="M776.6 277.09999999999997 Q778 279.9 776.6 282.7" fill="none" stroke="#8c8c8c" stroke-width="0.7"/>
<path d="M773.6 294.95 H776.6 M773.6 297.15 H776.6 M773.6 299.34999999999997 H776.6" stroke="#8c8c8c" stroke-width="1.2"/><path d="M776.6 294.34999999999997 Q778 297.15 776.6 299.95" fill="none" stroke="#8c8c8c" stroke-width="0.7"/>
<ellipse cx="788" cy="210.9" rx="7.7" ry="6.95" fill="#ebebeb" stroke="#050505" stroke-width="1.3"/>
<g transform="translate(788 228.95000000000002) scale(0.06293103448275862) translate(-394 -206)"><path d="M394 91 C373 91 357 107 348 127 C338 146 331.5 170 331.5 190 L332 214 C322 222 310 232 305.5 242 C302.5 250 303.5 262 305 272 C306.3 285 309.3 301 314.3 311.5 C316.3 316 319 322.8 324 320 L368.5 290.5 C375 297 385 299.5 394 299.5 C404 299.5 413 297 419.8 290.5 L462.5 319.3 C467 322.5 471 318.5 473 313 C477 303 481 287 483 272 C484.5 262 485 250 482.5 242 C478 232 466 222 456 214 L457 190 C457 170 450 146 440 127 C431 107 415 91 394 91 Z" fill="#ebebeb" stroke="#050505" stroke-width="40" stroke-linejoin="round"/><path d="M394 91 C373 91 357 107 348 127 C338 146 331.5 170 331.5 190 L332 214 C322 222 310 232 305.5 242 C302.5 250 303.5 262 305 272 C306.3 285 309.3 301 314.3 311.5 C316.3 316 319 322.8 324 320 L368.5 290.5 C375 297 385 299.5 394 299.5 C404 299.5 413 297 419.8 290.5 L462.5 319.3 C467 322.5 471 318.5 473 313 C477 303 481 287 483 272 C484.5 262 485 250 482.5 242 C478 232 466 222 456 214 L457 190 C457 170 450 146 440 127 C431 107 415 91 394 91 Z" fill="#ebebeb"/><ellipse cx="394" cy="180" rx="25" ry="24" fill="#0a0a0a"/></g>
<g transform="translate(788 245.15) scale(0.197 0.182) translate(-392 -339.5)"><path d="M366 313 C361 311.3 357 316 356 323 C355.5 330 357 340 360 345 C362 349 364.5 352 367 351.8 C370 351.5 373 347 375.5 343.5 L389.9 367.5 L411.5 341.7 C413 344 415 350 419.8 351.8 C423 352 425.5 346 426.5 341 C428 334 428.5 327 428 322 C427.5 316 424 311.3 418.5 313.3 C411 316 402 319.5 392 319.5 C382 319.5 373 316 366 313 Z" fill="#ebebeb" stroke="#050505" stroke-width="13" stroke-linejoin="round"/><path d="M366 313 C361 311.3 357 316 356 323 C355.5 330 357 340 360 345 C362 349 364.5 352 367 351.8 C370 351.5 373 347 375.5 343.5 L389.9 367.5 L411.5 341.7 C413 344 415 350 419.8 351.8 C423 352 425.5 346 426.5 341 C428 334 428.5 327 428 322 C427.5 316 424 311.3 418.5 313.3 C411 316 402 319.5 392 319.5 C382 319.5 373 316 366 313 Z" fill="#ebebeb"/></g>
<rect x="780.2" y="255.55" width="15.8" height="14.4" fill="#808080"/>
<rect x="780.2" y="272.79999999999995" width="15.8" height="14.4" fill="#292929"/>
<rect x="780" y="289.45" width="16.2" height="15.6" fill="#ffffff"/>
<g transform="translate(788.1 297.34999999999997) scale(0.052) translate(-394 -229)"><path d="M394 91 C373 91 357 107 348 127 C338 146 331.5 170 331.5 190 L332 214 C322 222 310 232 305.5 242 C302.5 250 303.5 262 305 272 C306.3 285 309.3 301 314.3 311.5 C316.3 316 319 322.8 324 320 L368.5 290.5 C375 297 385 299.5 394 299.5 C404 299.5 413 297 419.8 290.5 L462.5 319.3 C467 322.5 471 318.5 473 313 C477 303 481 287 483 272 C484.5 262 485 250 482.5 242 C478 232 466 222 456 214 L457 190 C457 170 450 146 440 127 C431 107 415 91 394 91 Z" fill="#5c2eaa"/><ellipse cx="394" cy="180" rx="27" ry="26" fill="#fff"/><ellipse cx="394" cy="180" rx="13" ry="12" fill="#5c2eaa"/></g>
<g transform="translate(788.1 297.34999999999997) scale(0.052) translate(-394 -229)"><path d="M366 313 C361 311.3 357 316 356 323 C355.5 330 357 340 360 345 C362 349 364.5 352 367 351.8 C370 351.5 373 347 375.5 343.5 L389.9 367.5 L411.5 341.7 C413 344 415 350 419.8 351.8 C423 352 425.5 346 426.5 341 C428 334 428.5 327 428 322 C427.5 316 424 311.3 418.5 313.3 C411 316 402 319.5 392 319.5 C382 319.5 373 316 366 313 Z" fill="#5c2eaa"/></g>
<path d="M816.7 193.9 L817.8 195.4 L818.9 193.9" fill="none" stroke="#787878" stroke-width="0.8"/>
<path d="M867.6 193.2 L868.6 192 L869.6 193.2 M867.6 196.4 L868.6 197.6 L869.6 196.4" fill="none" stroke="#6a6a6a" stroke-width="0.6"/>
<path d="M882.28 194.43 L882.28 195.17 L881.46 195.43 L881.25 195.95 L881.64 196.71 L881.11 197.24 L880.35 196.85 L879.83 197.06 L879.57 197.88 L878.83 197.88 L878.57 197.06 L878.05 196.85 L877.29 197.24 L876.76 196.71 L877.15 195.95 L876.94 195.43 L876.12 195.17 L876.12 194.43 L876.94 194.17 L877.15 193.65 L876.76 192.89 L877.29 192.36 L878.05 192.75 L878.57 192.54 L878.83 191.72 L879.57 191.72 L879.83 192.54 L880.35 192.75 L881.11 192.36 L881.64 192.89 L881.25 193.65 L881.46 194.17 Z" fill="#d4d4d4"/><circle cx="879.2" cy="194.8" r="1.2" fill="#383838"/>
<rect x="886.5" y="194.3" width="4.1" height="3.4" rx="0.5" fill="#9c9c9c"/><path d="M887.4 194.3 V192.9 Q887.4 191.7 888.55 191.7 Q889.7 191.7 889.7 192.9 V194.3" fill="none" stroke="#9c9c9c" stroke-width="0.75"/>
<rect x="886" y="177.1" width="5.7" height="6.3" fill="#a4a4a4"/><path d="M886 179.2 H891.7 M886 181.3 H891.7" stroke="#6a6a6a" stroke-width="0.6"/>
</svg>
<div class="abs" style="left:771px;top:433.6px;width:124px;height:16.4px;background:#343434;"></div>
<div class="abs" style="left:774px;top:438.2px;width:9.2px;height:8.6px;background:#1c1c1c;border-radius:1px"></div>
<svg width="895" height="455" viewBox="0 0 895 455">
<path d="M775.6 439.6 L778 439.2 L782 443.4 L779.6 446 L775.4 442 Z" fill="none" stroke="#e8e8e8" stroke-width="1" stroke-linejoin="round"/><circle cx="777.4" cy="441.2" r="0.7" fill="#e8e8e8"/>
<rect x="809.8" y="439" width="8" height="7" fill="#cdcdcd"/><circle cx="813.8" cy="442.5" r="1.3" fill="#151515"/>
<circle cx="824.6" cy="442.5" r="3.8" fill="#3c3c3c" stroke="#b4b4b4" stroke-width="0.8"/><path d="M822.4 444.7 L826.8 440.3" stroke="#c8c8c8" stroke-width="1.6" stroke-linecap="round"/>
<rect x="831" y="438.6" width="6.2" height="7.8" fill="#505050"/><rect x="831" y="438.4" width="6.2" height="0.8" fill="#a0a0a0"/><rect x="831" y="445.8" width="6.2" height="0.8" fill="#a0a0a0"/>
<text x="831.3" y="445" style="font-family:Liberation Sans,sans-serif;font-size:6.6px;font-style:italic;font-weight:bold;fill:#e4e4e4">fx</text>
<path d="M843 438.4 H846.4 V440.4 Q849 442.6 848.8 445 Q848.6 446.4 847 446.4 H842.4 Q840.6 446.4 840.5 445 Q840.4 442.6 843 440.4 Z" fill="#585858"/><rect x="841.2" y="442.6" width="7" height="0.9" fill="#3c3c3c"/>
<path d="M865.2 438.8 H868.4 L870.6 440.8 V445.4 Q870.6 446.4 869.6 446.4 H865.2 Q864.2 446.4 864.2 445.4 V439.8 Q864.2 438.8 865.2 438.8 Z" fill="#4c4c4c" stroke="#8c8c8c" stroke-width="0.8"/><rect x="865.8" y="441.4" width="3" height="3.6" fill="#6a6a6a"/><rect x="869.2" y="438.2" width="1.6" height="1.6" fill="#e4e4e4"/>
<rect x="875" y="438.6" width="6.6" height="7.8" rx="1" fill="#4c4c4c" stroke="#8c8c8c" stroke-width="0.8"/><path d="M876.8 440.8 H877.8 M879 440.8 H880 M876.8 444.2 H877.8 M879 444.2 H880" stroke="#9a9a9a" stroke-width="1"/>
<path d="M886.4 440.4 H891.4 L891 445.6 Q890.9 446.6 889.9 446.6 H887.9 Q886.9 446.6 886.8 445.6 Z" fill="#5c5c5c"/><rect x="886" y="439" width="5.8" height="1" rx="0.5" fill="#6a6a6a"/><path d="M888 441.4 V445.4 M889.8 441.4 V445.4" stroke="#484848" stroke-width="0.5"/>
</svg>
</div></body></html>
